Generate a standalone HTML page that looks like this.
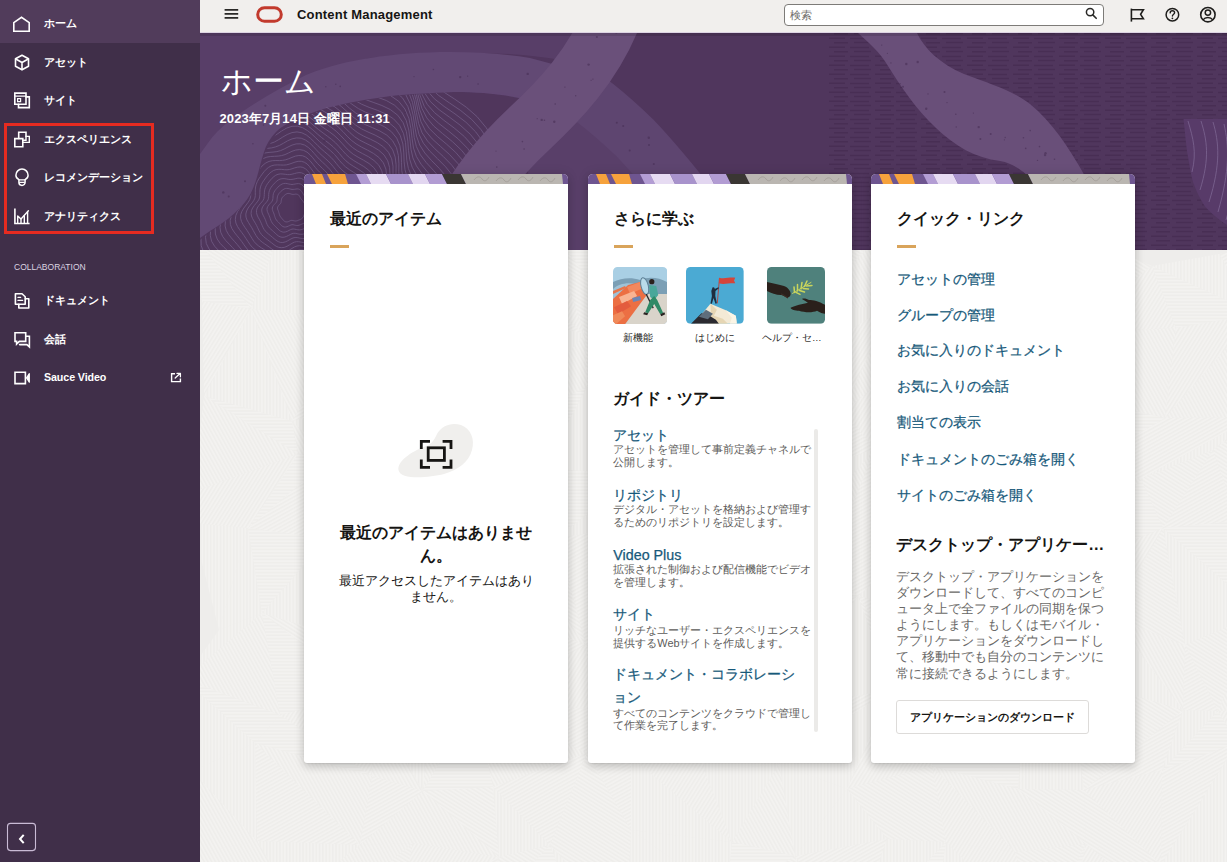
<!DOCTYPE html>
<html lang="ja">
<head>
<meta charset="utf-8">
<title>Content Management</title>
<style>
*{box-sizing:border-box;margin:0;padding:0}
html,body{width:1227px;height:862px;overflow:hidden;background:#efeeec}
body{font-family:"Liberation Sans",sans-serif;color:#161513;position:relative}
.abs{position:absolute}
.t{position:absolute;white-space:nowrap}
/* sidebar */
#side{position:absolute;left:0;top:0;width:200px;height:862px;background:#402f49;overflow:hidden}
#side .sel{position:absolute;left:0;top:0;width:200px;height:43px;background:#513c5b}
.nav{position:absolute;left:44px;color:#fff;font-weight:700;font-size:11px;line-height:14px;white-space:nowrap}
.ico{position:absolute;left:12px;width:20px;height:20px}
.ico svg{display:block}
#redbox{position:absolute;left:4px;top:123px;width:150px;height:111px;border:3px solid #e62b20}
/* topbar */
#top{position:absolute;left:200px;top:0;width:1027px;height:33px;background:#f1efed;overflow:hidden}
/* banner */
#banner{position:absolute;left:200px;top:33px;width:1027px;height:217px;background:#50365d;overflow:hidden}
#bg{position:absolute;left:200px;top:250px;width:1027px;height:612px;background:#f0efed;overflow:hidden}
/* cards */
.card{position:absolute;top:174px;width:264px;height:589px;background:#fff;border-radius:5px 5px 3px 3px;overflow:hidden;box-shadow:0 4px 8px rgba(0,0,0,.15),0 1px 1px rgba(0,0,0,.06),0 0 12px rgba(0,0,0,.10)}
.stripe{position:absolute;left:0;top:0;width:264px;height:10px}
.ctitle{position:absolute;left:26px;font-weight:700;font-size:16px;line-height:20px;white-space:nowrap;color:#161513}
.uline{position:absolute;left:26px;top:71px;width:19px;height:3px;background:#d9a45b}
.lnk{position:absolute;color:#17597a;white-space:nowrap;-webkit-text-stroke:.25px #17597a}
.desc{position:absolute;color:#5c5b59;font-size:10.9px;line-height:12px;white-space:nowrap}
</style>
</head>
<body>

<!-- ============ SIDEBAR ============ -->
<div id="side">
  <div class="sel"></div>
  <div class="nav" style="top:16.25px">ホーム</div>
  <div class="nav" style="top:54.75px">アセット</div>
  <div class="nav" style="top:93.25px">サイト</div>
  <div class="nav" style="top:131.75px">エクスペリエンス</div>
  <div class="nav" style="top:170.25px">レコメンデーション</div>
  <div class="nav" style="top:208.75px">アナリティクス</div>
  <div class="nav" style="top:293.25px">ドキュメント</div>
  <div class="nav" style="top:331.75px">会話</div>
  <div class="nav" style="top:370.25px;font-size:10.7px;letter-spacing:-.1px">Sauce Video</div>
  <div class="t" style="left:14px;top:260.6px;font-size:8.5px;line-height:12px;color:#dcd4e1;letter-spacing:0px">COLLABORATION</div>
  <svg class="abs" style="left:0;top:0" width="200" height="862" viewBox="0 0 200 862" fill="none" stroke="#fff" stroke-width="1.6" stroke-linejoin="round" stroke-linecap="round">
    <!-- home -->
    <path d="M13.8 31.2V22.6L21.5 17.3L29.2 22.6V31.2Z" stroke-linejoin="miter"/>
    <!-- asset cube -->
    <path d="M22 55.2L28.5 58.8V66.2L22 69.8L15.5 66.2V58.8Z"/>
    <path d="M15.8 59L22 62.5L28.2 59M22 62.5V69.5"/>
    <!-- sites -->
    <path d="M14.8 93.1H26V104.2H14.8Z" stroke-linejoin="miter"/>
    <path d="M14.8 96.2H26" stroke-width="1.3"/>
    <path d="M17.6 98.6H20.6V101.6H17.6Z" stroke-width="1.2" stroke-linejoin="miter"/>
    <path d="M26 96.9H29.3V107.6H18.5V104.4" stroke-linejoin="miter"/>
    <!-- experiences -->
    <path d="M14.8 138.6H22.8V146.8H14.8Z" stroke-linejoin="miter"/>
    <path d="M18.7 138.4V132.3H26V136.4" stroke-linejoin="miter"/>
    <path d="M22.8 140.2H26V136.4H29.3V142.4H22.9" stroke-linejoin="miter" stroke-width="1.4"/>
    <!-- bulb -->
    <path d="M18.9 179.7C16.8 178.5 15.9 176.8 15.9 175.2a6.1 6.1 0 1 1 12.2 0c0 1.6-.9 3.3-3 4.5V182.3a3.1 3.1 0 0 1-6.2 0Z" stroke-width="1.5"/>
    <path d="M18.9 179.9H25.1M19.2 182.4H24.8" stroke-width="1.3" stroke-linecap="butt"/>
    <!-- analytics -->
    <path d="M14.9 208.6V223.5H29.6" stroke-linejoin="miter" stroke-linecap="butt"/>
    <path d="M17.7 223V216L21 219L28.4 210.8" stroke-width="1.4"/>
    <path d="M21 223V219.2M24.3 223V215.6M27.6 223V212" stroke-width="1.4"/>
    <!-- documents -->
    <path d="M15.4 293.7H22L25.2 296.8V304.2H15.4Z"/>
    <path d="M18 297.4H20.6M18 300.4H22.6" stroke-width="1.3"/>
    <path d="M25.4 298.8H28.8V308H18.8V304.4" />
    <!-- conversations -->
    <path d="M15 332.7H25.7V341.4H19.3L16.6 344.1V341.4H15Z" stroke-linejoin="miter"/>
    <path d="M25.9 336.2H29.4V346.9L26.9 344.6H19.6" stroke-linejoin="miter"/>
    <!-- video -->
    <path d="M15 372.3H25.4V383.6H15Z" stroke-linejoin="miter"/>
    <path d="M29.3 373.6L26.6 377.9L29.3 382.2Z" fill="#fff" stroke-width="1.2"/>
    <!-- external link -->
    <path d="M175 373.8H171.6V381.6H180.4V378.6" stroke-width="1.4" stroke-linejoin="miter" stroke-linecap="butt"/>
    <path d="M175.2 378L180 373.6M177 373.4H180.4V376.8" stroke-width="1.3"/>
    <!-- collapse button -->
    <rect x="7.5" y="823.4" width="28" height="27.2" rx="3" stroke="#c9bbd5" stroke-width="1.1"/>
    <path d="M23.7 834.8L20 839L23.7 843.2" stroke-width="2" stroke-linejoin="miter" stroke-linecap="butt"/>
  </svg>
  <div id="redbox"></div>
</div>

<!-- ============ TOP BAR ============ -->
<div id="top">
  <div class="abs" style="left:0;top:32px;width:1027px;height:1px;background:#ddd4e3"></div>
  <div class="t" id="cm" style="left:97px;top:7px;font-size:13px;line-height:16px;font-weight:700;color:#161513;letter-spacing:.19px">Content Management</div>
  <div class="abs" style="left:584px;top:3.5px;width:320px;height:22px;background:#fff;border:1px solid #7d7b78;border-radius:4px"></div>
  <div class="t" style="left:590px;top:8px;font-size:11px;line-height:14px;color:#6b6966">検索</div>
  <svg class="abs" style="left:0;top:0" width="1027" height="33" viewBox="200 0 1027 33" fill="none" stroke="#1f1e1c" stroke-width="1.6">
    <!-- hamburger -->
    <path d="M224.6 9.9H238.2M224.6 13.9H238.2M224.6 17.8H238.2" stroke-width="1.7" stroke="#2a2927"/>
    <!-- oracle O -->
    <rect x="257.7" y="7.7" width="23.6" height="13.6" rx="6.8" stroke="#c23a2d" stroke-width="3"/>
    <!-- search -->
    <circle cx="1090.1" cy="12.1" r="3.7" stroke-width="1.5" stroke="#2a2927"/>
    <path d="M1092.8 14.9L1096.2 18.3" stroke-width="1.6" stroke="#2a2927" stroke-linecap="round"/>
    <!-- flag -->
    <path d="M1131.4 8.6V21.6" stroke-width="1.6"/>
    <path d="M1131.4 9.7H1143.4L1140.6 14.3L1143.4 18.8H1131.4" stroke-width="1.6" stroke-linejoin="miter"/>
    <!-- help -->
    <circle cx="1172.4" cy="14.7" r="6.3" stroke-width="1.5"/>
    <path d="M1170.2 12.9C1170.2 11.5 1171.2 10.8 1172.4 10.8C1173.7 10.8 1174.6 11.6 1174.6 12.7C1174.6 14.2 1172.4 14.3 1172.4 16.1" stroke-width="1.4" stroke-linecap="round"/>
    <circle cx="1172.4" cy="18.3" r="0.9" fill="#1f1e1c" stroke="none"/>
    <!-- user -->
    <circle cx="1207.9" cy="14.7" r="7.2" stroke-width="1.6"/>
    <circle cx="1207.9" cy="12.6" r="2.7" stroke-width="1.5"/>
    <path d="M1203 19.9C1204.2 18.3 1205.8 17.6 1207.9 17.6C1210 17.6 1211.6 18.3 1212.8 19.9" stroke-width="1.5"/>
  </svg>
</div>

<!-- ============ BANNER ============ -->
<div id="banner">
  <svg class="abs" style="left:0;top:0" width="1027" height="217" viewBox="200 33 1027 217">
    <defs>
      <pattern id="dash" x="0" y="0" width="46" height="9" patternUnits="userSpaceOnUse">
        <path d="M1 2.2h16M22 2.6h19M6 6.8h14M26 6.5h17" stroke="#442b50" stroke-width="1.5" fill="none" opacity=".7"/>
      </pattern>
      <filter id="grain" x="0" y="0" width="100%" height="100%">
        <feTurbulence type="fractalNoise" baseFrequency="0.9" numOctaves="2" seed="3" result="n"/>
        <feColorMatrix type="matrix" values="0 0 0 0 0.1  0 0 0 0 0.05  0 0 0 0 0.15  0 0 0 0.55 -0.22"/>
      </filter>
    </defs>
    <rect x="200" y="33" width="1027" height="217" fill="#50365d"/>
    <clipPath id="cl1"><path d="M200 240L210 232L234 215L251 195L258 177L265 152L277 133L300 119L327 107L391 96L454 92L500 92L540 100L560 112L640 140V250H200Z"/></clipPath>
    <!-- upper-left zone (above arch) -->
    <path d="M200 33H600L560 60C520 52 454 50 370 58C306 72 242 110 200 156Z" fill="#583e68"/>
    <!-- lighter patch between ribbons (behind gap card1/card2) -->
    <path d="M520 120L600 120L640 170L630 250H540Z" fill="#593f69"/>
    <!-- ribbon B: arch (left leg) -->
    <path d="M200 154C206 146 211 138 217 132C225 124 233 118 242 112C262 98 284 86 306 75C328 66 350 61 370 58C420 50 480 50 530 58L575 70L560 112C540 100 500 92 454 92C430 93 410 94 391 96C368 99 346 103 327 108C316 111 308 114 300 118C290 122 282 126 276 132C270 138 266 145 264 152C261 161 259 170 257 177C255 184 253 189 250.5 194C246 202 240 208 233.7 214C226 221 218 226 210 231L200 238Z" fill="#624974"/>
    <!-- contour lines -->
    <g clip-path="url(#cl1)" fill="none" stroke="#8b79a3" stroke-width=".9" opacity=".5" stroke-linejoin="round">
      <path d="M307.4 208.0L307.5 209.0L307.3 210.0L306.8 210.9L306.1 211.8L305.5 212.6L304.9 213.3L304.4 214.1L304.1 215.0L303.7 215.8L303.4 216.7L302.9 217.5L302.2 218.2L301.5 218.8L300.6 219.3L299.8 219.7L298.9 220.0L298.1 220.4L297.3 220.7L296.4 220.9L295.5 221.0L294.6 220.9L293.7 220.7L292.8 220.5L292.0 220.4L291.2 220.4L290.3 220.7L289.4 221.1L288.4 221.6L287.3 221.9L286.2 221.9L285.2 221.7L284.4 221.2L283.6 220.5L283.0 219.8L282.4 219.0L281.7 218.3L281.1 217.5L280.5 216.8L280.0 216.0L279.6 215.2L279.3 214.3L279.1 213.4L278.8 212.5L278.6 211.6L278.3 210.7L277.9 209.9L277.6 208.9L277.5 208.0L277.7 207.1L278.1 206.2L278.7 205.4L279.5 204.6L280.1 204.0L280.7 203.3L281.0 202.6L281.1 201.7L281.2 200.8L281.4 199.8L281.6 198.9L282.0 198.0L282.5 197.2L283.2 196.5L283.8 195.8L284.6 195.2L285.4 194.5L286.2 194.0L287.1 193.6L288.1 193.4L289.1 193.5L290.1 193.7L291.1 194.0L292.0 194.3L292.9 194.4L293.8 194.4L294.7 194.3L295.7 194.1L296.7 194.2L297.6 194.4L298.5 194.9L299.1 195.6L299.7 196.5L300.2 197.4L300.6 198.2L301.1 198.9L301.6 199.6L302.2 200.2L302.7 200.8L303.2 201.5L303.7 202.3L304.1 203.0L304.6 203.7L305.1 204.5L305.8 205.3L306.4 206.1L307.0 207.0L307.4 208.0"/>
      <path d="M313.0 208.0L313.0 209.4L312.5 210.7L311.8 211.9L310.9 213.1L310.1 214.1L309.4 215.2L308.9 216.3L308.5 217.5L308.1 218.8L307.6 220.0L306.8 221.0L305.9 221.9L304.8 222.6L303.7 223.3L302.6 223.8L301.4 224.3L300.3 224.8L299.1 225.2L297.9 225.5L296.7 225.5L295.4 225.3L294.2 225.0L293.1 224.7L292.0 224.7L290.9 225.0L289.7 225.5L288.4 226.1L287.0 226.7L285.5 227.0L284.1 227.0L282.9 226.5L281.7 225.8L280.8 224.8L279.9 223.8L279.0 222.8L278.1 221.9L277.2 221.0L276.4 220.0L275.7 218.9L275.2 217.7L274.8 216.5L274.4 215.3L274.1 214.1L273.6 212.9L273.1 211.8L272.6 210.5L272.3 209.3L272.3 208.0L272.7 206.7L273.4 205.5L274.3 204.5L275.3 203.5L276.1 202.6L276.7 201.6L277.0 200.6L277.1 199.4L277.2 198.1L277.4 196.8L277.8 195.5L278.4 194.4L279.1 193.3L280.0 192.4L280.9 191.4L281.9 190.5L283.0 189.7L284.1 189.0L285.4 188.5L286.7 188.4L288.1 188.5L289.5 188.8L290.8 189.2L292.0 189.4L293.2 189.4L294.5 189.3L295.8 189.1L297.1 188.9L298.4 189.0L299.7 189.5L300.7 190.3L301.6 191.4L302.3 192.5L303.0 193.7L303.6 194.8L304.3 195.7L305.1 196.6L305.8 197.4L306.5 198.3L307.2 199.2L307.8 200.2L308.4 201.2L309.1 202.2L310.0 203.2L310.9 204.2L311.8 205.4L312.6 206.7L313.0 208.0"/>
      <path d="M318.5 208.0L318.3 209.7L317.6 211.4L316.6 212.9L315.6 214.3L314.7 215.7L314.0 217.1L313.5 218.6L313.1 220.2L312.6 221.7L311.8 223.2L310.8 224.5L309.6 225.6L308.2 226.5L306.8 227.3L305.4 228.0L303.9 228.7L302.5 229.3L301.0 229.7L299.4 229.9L297.8 229.8L296.3 229.5L294.8 229.2L293.4 229.0L292.0 229.1L290.6 229.6L289.0 230.4L287.4 231.3L285.6 231.9L283.8 232.2L282.1 231.9L280.5 231.2L279.2 230.2L277.9 229.0L276.8 227.8L275.6 226.7L274.5 225.5L273.3 224.4L272.3 223.1L271.5 221.7L270.8 220.2L270.3 218.7L269.8 217.2L269.2 215.7L268.6 214.3L267.9 212.8L267.3 211.3L267.0 209.6L267.1 208.0L267.8 206.4L268.8 204.9L270.0 203.6L271.2 202.4L272.1 201.2L272.6 200.0L272.9 198.6L273.0 197.0L273.1 195.4L273.4 193.7L274.0 192.2L274.8 190.8L275.8 189.5L276.9 188.3L278.0 187.1L279.2 185.9L280.6 184.9L282.1 184.0L283.7 183.5L285.4 183.4L287.2 183.6L288.8 184.0L290.4 184.3L292.0 184.5L293.6 184.3L295.2 184.0L296.8 183.7L298.5 183.6L300.2 183.9L301.7 184.6L303.0 185.8L304.0 187.2L304.9 188.7L305.7 190.1L306.6 191.3L307.5 192.5L308.5 193.5L309.5 194.6L310.3 195.7L311.1 196.9L311.9 198.2L312.8 199.4L313.8 200.6L314.9 201.9L316.2 203.2L317.3 204.7L318.1 206.3L318.5 208.0"/>
      <path d="M323.9 208.0L323.4 210.1L322.5 212.0L321.3 213.8L320.2 215.5L319.3 217.3L318.7 219.0L318.2 220.9L317.8 222.9L317.1 224.8L316.1 226.5L314.8 228.0L313.3 229.3L311.6 230.3L309.9 231.3L308.2 232.2L306.5 233.1L304.7 233.7L302.8 234.2L300.9 234.3L299.0 234.1L297.1 233.7L295.3 233.3L293.7 233.3L292.0 233.7L290.3 234.5L288.4 235.5L286.3 236.5L284.2 237.2L282.0 237.3L280.1 236.8L278.3 235.9L276.7 234.6L275.2 233.2L273.7 231.8L272.3 230.5L270.8 229.2L269.4 227.8L268.2 226.3L267.2 224.6L266.4 222.8L265.8 220.9L265.1 219.2L264.3 217.4L263.4 215.7L262.5 213.9L261.9 212.0L261.7 210.0L262.1 208.0L263.1 206.1L264.4 204.4L265.9 202.8L267.1 201.3L268.0 199.9L268.5 198.3L268.7 196.5L268.7 194.6L268.9 192.6L269.4 190.6L270.2 188.8L271.2 187.2L272.4 185.6L273.7 184.1L275.1 182.7L276.6 181.2L278.2 180.0L280.0 179.1L282.0 178.7L284.1 178.6L286.2 178.9L288.2 179.3L290.1 179.5L292.0 179.4L293.9 179.1L295.9 178.6L297.9 178.2L300.0 178.2L301.9 178.7L303.7 179.8L305.1 181.4L306.4 183.1L307.4 184.9L308.5 186.5L309.6 187.9L310.8 189.2L312.0 190.5L313.1 191.8L314.1 193.2L315.1 194.7L316.1 196.1L317.2 197.6L318.5 199.0L320.0 200.5L321.5 202.1L322.8 203.9L323.7 205.9L323.9 208.0"/>
      <path d="M329.1 208.0L328.3 210.4L327.2 212.6L325.9 214.7L324.8 216.8L324.0 218.8L323.4 221.0L323.0 223.3L322.5 225.6L321.7 227.8L320.4 229.8L318.8 231.5L316.9 232.9L314.9 234.2L313.0 235.3L311.0 236.4L309.0 237.4L306.9 238.2L304.6 238.5L302.4 238.5L300.1 238.2L297.9 237.7L295.9 237.5L293.9 237.7L292.0 238.4L289.9 239.5L287.7 240.8L285.3 241.9L282.8 242.5L280.3 242.4L278.1 241.6L276.0 240.3L274.2 238.8L272.4 237.3L270.7 235.8L268.9 234.3L267.1 232.9L265.5 231.2L264.1 229.4L263.0 227.4L262.1 225.3L261.2 223.2L260.3 221.2L259.2 219.1L258.0 217.1L257.1 215.0L256.5 212.7L256.5 210.3L257.2 208.0L258.6 205.8L260.2 203.8L261.8 202.0L263.1 200.3L263.9 198.5L264.2 196.5L264.3 194.4L264.4 192.1L264.7 189.8L265.4 187.6L266.4 185.5L267.6 183.6L269.0 181.8L270.5 180.0L272.1 178.2L273.9 176.6L275.8 175.2L278.0 174.3L280.4 173.9L282.9 174.0L285.3 174.3L287.6 174.6L289.8 174.6L292.0 174.2L294.3 173.6L296.6 173.0L299.0 172.6L301.4 172.8L303.7 173.7L305.6 175.2L307.2 177.1L308.6 179.2L309.9 181.2L311.2 182.9L312.6 184.5L314.0 186.0L315.4 187.5L316.7 189.0L317.9 190.7L319.0 192.4L320.2 194.1L321.7 195.7L323.4 197.3L325.2 199.1L327.0 201.0L328.4 203.2L329.1 205.6L329.1 208.0"/>
      <path d="M334.1 208.0L333.1 210.7L331.7 213.2L330.4 215.6L329.4 218.0L328.8 220.5L328.4 223.1L328.0 225.7L327.3 228.4L326.2 230.9L324.7 233.1L322.7 234.9L320.6 236.6L318.3 238.0L316.1 239.4L313.8 240.7L311.5 241.8L309.0 242.5L306.4 242.7L303.7 242.6L301.1 242.1L298.7 241.7L296.4 241.7L294.2 242.2L292.0 243.3L289.6 244.8L287.0 246.3L284.2 247.4L281.3 247.7L278.6 247.3L276.2 246.3L273.9 244.7L271.8 243.0L269.7 241.4L267.6 239.8L265.5 238.2L263.5 236.5L261.6 234.6L260.1 232.5L258.8 230.2L257.7 227.8L256.6 225.5L255.3 223.2L253.9 220.9L252.6 218.6L251.5 216.0L251.1 213.4L251.4 210.7L252.6 208.0L254.3 205.5L256.1 203.3L257.8 201.2L259.0 199.2L259.7 197.0L259.9 194.7L259.9 192.2L260.0 189.5L260.5 186.9L261.4 184.5L262.6 182.2L264.1 180.1L265.6 177.9L267.3 175.8L269.1 173.8L271.2 172.0L273.5 170.5L276.1 169.6L278.9 169.3L281.7 169.4L284.4 169.7L287.0 169.8L289.5 169.5L292.0 168.8L294.6 167.9L297.4 167.2L300.2 166.9L302.9 167.4L305.3 168.7L307.5 170.6L309.3 172.9L310.9 175.3L312.4 177.4L314.0 179.3L315.6 181.1L317.3 182.7L318.8 184.5L320.3 186.3L321.6 188.2L323.0 190.1L324.5 192.0L326.3 193.8L328.4 195.6L330.6 197.7L332.5 199.9L333.9 202.5L334.4 205.2L334.1 208.0"/>
      <path d="M338.9 208.0L337.6 211.0L336.2 213.8L335.0 216.5L334.1 219.3L333.7 222.2L333.4 225.2L333.0 228.2L332.2 231.2L330.8 233.9L328.9 236.3L326.6 238.4L324.2 240.2L321.7 241.9L319.2 243.5L316.7 244.9L314.0 246.1L311.1 246.7L308.1 246.8L305.1 246.5L302.2 246.0L299.5 245.7L297.0 246.0L294.6 246.9L292.0 248.4L289.2 250.2L286.2 251.8L283.1 252.8L280.0 252.9L277.0 252.2L274.3 250.8L271.8 249.0L269.4 247.2L267.0 245.5L264.5 243.8L262.1 242.1L259.8 240.2L257.8 238.0L256.1 235.6L254.6 233.0L253.2 230.4L251.8 227.8L250.2 225.3L248.6 222.7L247.0 220.0L246.0 217.1L245.8 214.1L246.6 211.0L248.1 208.0L250.1 205.3L252.2 202.8L253.8 200.4L254.9 198.1L255.3 195.5L255.3 192.8L255.3 189.9L255.6 187.0L256.3 184.1L257.4 181.4L258.8 178.9L260.5 176.5L262.2 174.1L264.1 171.6L266.2 169.3L268.5 167.4L271.2 165.9L274.2 165.1L277.4 164.9L280.5 165.0L283.5 165.1L286.3 164.9L289.1 164.2L292.0 163.2L295.0 162.1L298.1 161.3L301.3 161.3L304.3 162.2L307.0 163.9L309.3 166.3L311.3 168.9L313.1 171.4L314.9 173.7L316.8 175.7L318.7 177.6L320.5 179.5L322.3 181.5L323.8 183.6L325.4 185.7L327.0 187.8L328.9 189.8L331.1 191.8L333.6 193.9L336.0 196.2L338.0 198.8L339.2 201.8L339.5 204.9L338.9 208.0"/>
      <path d="M343.5 208.0L342.1 211.3L340.6 214.4L339.6 217.5L339.0 220.6L338.8 223.9L338.6 227.3L338.1 230.8L337.1 234.0L335.4 237.0L333.1 239.6L330.6 241.8L327.9 243.9L325.2 245.8L322.4 247.6L319.5 249.2L316.4 250.3L313.1 250.8L309.7 250.7L306.4 250.3L303.2 249.9L300.3 249.8L297.6 250.5L294.9 251.9L292.0 253.8L288.9 255.8M272.5 255.1L269.7 253.2L267.0 251.3L264.2 249.6L261.4 247.9L258.7 246.0L256.1 243.9L253.9 241.4L252.1 238.6L250.4 235.8L248.7 233.0L246.9 230.2L245.0 227.5L243.1 224.6L241.5 221.5L240.6 218.2L240.7 214.7L241.9 211.3L243.9 208.0L246.1 205.0L248.2 202.2L249.8 199.6L250.6 196.9L250.8 194.0L250.7 190.9L250.7 187.6L251.1 184.4L252.1 181.3L253.4 178.4L255.1 175.6L256.9 172.9L258.8 170.1L260.9 167.4L263.2 164.9L265.9 162.9L269.0 161.4L272.4 160.7L275.9 160.5L279.3 160.6L282.5 160.4L285.7 159.8L288.8 158.7L292.0 157.4L295.4 156.1L298.9 155.5L302.4 155.7L305.7 157.1L308.5 159.3L311.1 162.0L313.3 164.9L315.4 167.5L317.4 169.9L319.6 172.1L321.7 174.1L323.8 176.2L325.6 178.5L327.4 180.9L329.1 183.2L331.1 185.4L333.4 187.6L336.0 189.8L338.9 192.1L341.5 194.7L343.5 197.8L344.5 201.1L344.4 204.6L343.5 208.0"/>
      <path d="M347.8 208.0L346.4 211.6L345.1 215.0L344.4 218.4L344.1 222.0L344.1 225.7L343.9 229.5L343.3 233.3L341.9 236.8L339.9 240.0L337.3 242.8L334.5 245.3L331.6 247.6L328.6 249.7L325.6 251.7L322.3 253.3L318.8 254.4M307.6 254.0L304.3 253.7L301.2 254.0M264.6 255.5L261.4 253.7L258.3 251.9L255.3 249.9L252.5 247.5L250.1 244.7L248.1 241.7L246.1 238.7L244.1 235.7L241.9 232.7L239.6 229.7L237.5 226.5L235.9 223.0L235.3 219.3L235.9 215.4L237.5 211.6L239.8 208.0L242.2 204.7L244.3 201.7L245.5 198.8L246.1 195.7L246.1 192.4L245.9 188.9L246.1 185.4L246.7 181.9L247.9 178.5L249.5 175.4L251.3 172.3L253.3 169.3L255.3 166.2L257.6 163.2L260.3 160.5L263.4 158.5L266.9 157.1L270.7 156.5L274.4 156.3L278.1 156.1L281.6 155.6L285.0 154.6L288.4 153.0L292.0 151.3L295.8 150.0L299.7 149.6L303.5 150.3L307.0 152.1L310.1 154.8L312.8 157.8L315.2 160.9L317.6 163.6L320.0 166.1L322.4 168.4L324.8 170.6L327.0 173.0L329.0 175.6L330.9 178.1L332.9 180.7L335.3 183.0L338.0 185.3L341.1 187.6L344.3 190.3L346.9 193.3L348.8 196.7L349.4 200.4L349.0 204.3L347.8 208.0"/>
      <path d="M352.1 208.0L350.7 211.8L349.7 215.6L349.3 219.4L349.3 223.4L349.5 227.5L349.3 231.7L348.4 235.8L346.7 239.6L344.3 243.0L341.5 246.0L338.4 248.7L335.3 251.3L332.1 253.7L328.7 255.8M255.1 256.0L251.9 253.8L248.9 251.1L246.4 248.0L244.0 244.8L241.8 241.6L239.3 238.4L236.7 235.3L234.1 232.0L231.8 228.4L230.4 224.5L230.2 220.3L231.3 216.0L233.4 211.8L235.9 208.0L238.4 204.5L240.2 201.2L241.2 197.9L241.4 194.4L241.2 190.8L241.1 186.9L241.4 183.1L242.3 179.3L243.8 175.8L245.6 172.4L247.6 169.0L249.6 165.6L251.9 162.2L254.4 159.0L257.4 156.3L261.0 154.2L264.9 153.0L269.0 152.4L273.0 152.1L276.9 151.6L280.6 150.6L284.2 149.0L288.0 147.0L292.0 145.1L296.2 143.9L300.4 143.8L304.5 145.0L308.2 147.4L311.5 150.4L314.5 153.8L317.2 156.9L319.9 159.7L322.6 162.3L325.2 164.7L327.8 167.2L330.2 169.8L332.3 172.6L334.5 175.4L336.8 178.0L339.6 180.5L342.9 182.9L346.4 185.5L349.7 188.4L352.3 191.8L353.9 195.7L354.2 199.8L353.4 204.0L352.1 208.0"/>
      <path d="M356.2 208.0L355.0 212.1L354.4 216.2L354.4 220.4L354.8 224.8L355.0 229.4L354.7 234.0L353.5 238.3L351.5 242.3L348.7 245.9L345.6 249.2L342.4 252.2L339.1 255.1M245.4 254.6L242.6 251.3L240.0 247.9L237.3 244.6L234.4 241.3L231.3 237.9L228.4 234.3L226.2 230.3L225.1 225.9L225.4 221.3L226.9 216.6L229.4 212.1L232.1 208.0L234.5 204.2L236.0 200.6L236.6 197.0L236.5 193.1L236.3 189.1L236.3 184.9L236.8 180.8L238.0 176.8L239.7 173.1L241.7 169.4L243.8 165.7L245.9 161.9L248.4 158.3L251.2 154.9L254.6 152.1L258.6 150.1L262.9 149.0L267.3 148.4L271.6 147.9L275.6 146.9L279.5 145.4L283.5 143.2L287.6 140.8L292.0 138.9L296.6 137.9L301.2 138.2L305.5 140.0L309.5 142.8L313.0 146.2L316.2 149.7L319.2 152.9L322.2 155.7L325.2 158.4L328.1 161.0L330.8 163.8L333.3 166.7L335.6 169.7L338.1 172.7L340.8 175.4L344.1 177.9L347.9 180.5L351.7 183.3L355.1 186.6L357.5 190.4L358.7 194.7L358.6 199.2L357.6 203.7L356.2 208.0"/>
      <path d="M360.3 208.0L359.5 212.4L359.3 216.9L359.8 221.5L360.4 226.3L360.6 231.3L360.1 236.2L358.5 240.8L356.1 245.0L353.1 248.9L349.8 252.4L346.4 255.7M238.8 254.7L235.8 251.1L232.6 247.7L229.3 244.2L225.8 240.6L222.8 236.7L220.7 232.2L220.0 227.3L220.8 222.2L222.9 217.1L225.6 212.4L228.4 208.0L230.4 204.0L231.6 200.0L231.8 196.0L231.5 191.8L231.2 187.4L231.4 182.9L232.3 178.5L233.8 174.4L235.7 170.4L237.8 166.4L239.9 162.3L242.2 158.2L244.9 154.3L248.1 150.8L252.0 148.1L256.4 146.3L261.0 145.2L265.7 144.4L270.1 143.5L274.3 142.1L278.4 139.8L282.7 137.1L287.2 134.5L292.0 132.6L297.0 131.9L301.9 132.8L306.5 135.1L310.6 138.4L314.4 142.1L317.8 145.6L321.2 148.8L324.5 151.7L327.8 154.5L330.9 157.3L333.8 160.4L336.4 163.6L339.0 166.8L341.8 169.8L345.0 172.6L348.8 175.2L353.0 177.9L357.0 181.1L360.4 184.8L362.5 189.1L363.3 193.8L362.8 198.7L361.6 203.4L360.3 208.0"/>
      <path d="M364.5 208.0L364.1 212.7L364.5 217.5L365.3 222.6L366.1 227.9L366.2 233.2L365.4 238.4L363.5 243.3L360.8 247.7L357.6 251.8L354.1 255.6M231.5 254.4L227.8 250.9L224.0 247.3L220.2 243.4L217.2 239.0L215.4 234.0L215.2 228.6L216.5 223.0L219.0 217.6L221.9 212.6L224.5 208.0L226.2 203.7L226.9 199.4L226.8 195.0L226.3 190.4L226.2 185.7L226.6 180.9L227.8 176.3L229.6 171.9L231.6 167.6L233.8 163.3L236.0 158.9L238.5 154.5L241.5 150.4L245.1 146.9L249.4 144.3L254.2 142.5L259.2 141.4L264.0 140.4L268.6 139.0L272.9 136.9L277.3 134.0L281.8 130.8L286.8 128.0L292.0 126.3L297.4 126.2L302.6 127.7L307.4 130.5L311.8 134.1L315.8 137.9L319.5 141.5L323.2 144.7L326.9 147.6L330.4 150.6L333.7 153.7L336.7 157.0L339.5 160.5L342.4 163.8L345.6 166.9L349.4 169.7L353.7 172.4L358.2 175.3L362.4 178.9L365.5 183.0L367.3 187.8L367.6 193.0L366.8 198.2L365.5 203.2L364.5 208.0"/>
      <path d="M368.8 208.0L369.0 213.0L369.9 218.3L371.1 223.7L371.9 229.4L371.8 235.1L370.7 240.6L368.4 245.7L365.4 250.4L362.0 254.8M222.8 254.2L218.5 250.4L214.6 246.2L211.6 241.3L210.3 235.7L210.6 229.8L212.5 223.8L215.4 218.1L218.3 212.8L220.5 208.0L221.8 203.4L222.0 198.8L221.6 194.0L221.1 189.0L221.1 183.9L221.9 179.0L223.4 174.2L225.4 169.5L227.5 164.9L229.8 160.2L232.1 155.5L234.8 150.8L238.2 146.6L242.2 143.1L247.0 140.6L252.1 139.0L257.3 137.7L262.3 136.3L267.0 134.3L271.5 131.4L276.1 127.9L281.0 124.4L286.3 121.6L292.0 120.2L297.7 120.6L303.2 122.7L308.3 126.1L312.9 129.9L317.2 133.8L321.3 137.3L325.3 140.5L329.2 143.5L333.0 146.7L336.4 150.1L339.6 153.7L342.6 157.4L345.9 160.8L349.6 163.8L353.9 166.6L358.7 169.5L363.5 172.7L367.6 176.7L370.4 181.4L371.7 186.6L371.6 192.2L370.6 197.7L369.4 202.9L368.8 208.0"/>
      <path d="M373.3 208.0L374.1 213.4L375.5 219.0L376.9 224.9L377.7 231.0L377.4 237.0L375.8 242.7L373.3 248.1L370.0 253.1L366.5 257.8M217.6 257.7L212.9 253.6L209.0 248.9L206.3 243.5L205.5 237.4L206.4 230.9L208.8 224.5L211.8 218.6L214.5 213.1L216.4 208.0L217.1 203.1L216.8 198.1L216.2 192.9L215.9 187.6L216.2 182.3L217.3 177.0L219.0 172.0L221.2 167.1L223.4 162.2L225.7 157.1L228.2 152.0L231.2 147.2L234.9 142.9L239.5 139.6L244.7 137.2L250.1 135.5L255.5 134.0L260.5 132.0L265.3 129.2L269.9 125.6L274.8 121.5L280.1 117.8L285.9 115.2L292.0 114.3L298.1 115.4L303.8 118.1L309.2 121.7L314.0 125.8L318.6 129.6L323.1 133.0L327.4 136.2L331.6 139.4L335.5 142.8L339.1 146.6L342.5 150.5L345.8 154.2L349.5 157.6L353.8 160.6L358.7 163.5L363.8 166.5L368.7 170.2L372.6 174.6L375.0 179.8L375.8 185.6L375.3 191.4L374.3 197.2L373.4 202.7L373.3 208.0"/>
      <path d="M378.1 208.0L379.5 213.7L381.4 219.8L382.9 226.1L383.5 232.5L382.8 238.8L380.9 244.8L378.1 250.5L374.7 255.7M207.4 256.9L203.5 251.7L201.2 245.6L201.0 238.9L202.5 232.0L205.3 225.3L208.2 219.0L210.6 213.3L211.9 208.0L212.1 202.8L211.5 197.4L210.8 191.9L210.6 186.2L211.3 180.6L212.7 175.2L214.7 169.9L216.9 164.7L219.2 159.4L221.6 153.9L224.3 148.6L227.6 143.6L231.9 139.4L236.9 136.2L242.5 133.9L248.2 132.1L253.6 130.1L258.6 127.5L263.4 123.9L268.3 119.5L273.5 115.0L279.3 111.2L285.5 108.9L292.0 108.7L298.4 110.4L304.4 113.6L310.0 117.5L315.2 121.6L320.1 125.3L324.9 128.7L329.5 131.9L334.0 135.3L338.1 139.1L341.8 143.1L345.4 147.1L349.1 150.9L353.3 154.3L358.1 157.2L363.6 160.2L369.0 163.5L373.8 167.6L377.4 172.6L379.2 178.4L379.6 184.5L378.9 190.7L377.9 196.7L377.6 202.4L378.1 208.0"/>
      <path d="M383.2 208.0L385.2 214.1L387.4 220.6L388.9 227.3L389.2 234.1L388.2 240.7L386.0 246.9L382.9 252.8L379.4 258.5M198.2 254.3L196.5 247.6L196.9 240.3L198.9 232.9L201.8 225.9L204.6 219.5L206.5 213.6L207.2 208.0L206.8 202.4L206.0 196.7L205.4 190.8L205.5 184.8L206.5 179.0L208.2 173.3L210.4 167.8L212.7 162.2L215.0 156.5L217.4 150.8L220.4 145.2L224.2 140.2L229.0 136.1L234.5 133.0L240.4 130.7L246.2 128.6L251.6 126.1L256.6 122.6L261.5 118.2L266.6 113.1L272.2 108.3L278.4 104.7L285.1 102.9L292.0 103.4L298.7 105.7L305.0 109.2L310.8 113.3L316.3 117.3L321.6 120.9L326.7 124.2L331.6 127.6L336.3 131.3L340.5 135.4L344.5 139.6L348.3 143.8L352.5 147.5L357.3 150.8L362.7 153.7L368.6 156.8L374.1 160.6L378.8 165.2L381.8 170.8L383.1 177.1L383.1 183.6L382.3 190.0L381.7 196.2L381.9 202.1L383.2 208.0"/>
      <path d="M388.6 208.0L391.1 214.5L393.5 221.4L394.9 228.5L394.9 235.6L393.5 242.4L390.9 249.0L387.7 255.2M195.5 233.9L198.4 226.6L200.8 220.0L202.1 213.9L202.1 208.0L201.3 202.1L200.4 195.9L200.0 189.7L200.4 183.5L201.8 177.4L203.8 171.5L206.1 165.6L208.3 159.7L210.6 153.6L213.3 147.6L216.6 141.9L221.0 137.0L226.2 133.0L232.2 130.0L238.3 127.6L244.1 125.0L249.5 121.7L254.5 117.4L259.4 112.1L264.8 106.5L270.8 101.6L277.6 98.3L284.7 97.2L292.0 98.3L299.0 101.2L305.6 105.0L311.7 109.1L317.5 112.9L323.1 116.4L328.5 119.8L333.7 123.3L338.6 127.3L343.0 131.7L347.1 136.2L351.4 140.3L356.1 143.9L361.5 147.1L367.5 150.1L373.6 153.5L379.2 157.7L383.4 162.9L385.9 169.1L386.7 175.8L386.4 182.7L385.7 189.4L385.6 195.7L386.6 201.8L388.6 208.0"/>
      <path d="M394.3 208.0L397.2 214.9L399.6 222.2L400.7 229.6L400.4 237.0L398.6 244.2L395.9 251.0L392.6 257.6M194.9 227.3L196.8 220.5L197.3 214.2L196.8 208.0L195.7 201.7M195.5 182.1L197.2 175.8L199.4 169.6L201.7 163.5L203.9 157.1L206.3 150.7L209.2 144.5L213.0 138.7L217.9 133.9L223.7 130.1L229.9 127.1L236.1 124.4L241.9 121.2L247.2 117.1L252.2 111.8L257.3 105.8L263.0 99.8L269.5 95.0L276.8 92.2L284.4 91.8L292.0 93.6L299.3 96.9L306.1 100.8L312.5 104.8L318.7 108.4L324.6 111.8L330.4 115.3L335.8 119.1L340.8 123.5L345.4 128.1L349.9 132.6L354.5 136.7L359.8 140.2L365.8 143.2L372.3 146.4L378.6 150.1L384.0 154.9L387.7 160.8L389.6 167.6L390.0 174.7L389.5 181.9L389.2 188.7L389.8 195.1L391.5 201.5L394.3 208.0"/>
      <path d="M400.2 208.0L403.4 215.3L405.7 223.0L406.5 230.8L405.8 238.5L403.7 245.9L400.9 253.1L397.6 260.1M194.9 167.8L197.2 161.2L199.4 154.6L202.0 147.9L205.3 141.5L209.6 135.8L215.1 131.1L221.3 127.4L227.8 124.3L233.9 121.1L239.6 117.2L244.7 112.1L249.7 105.8L255.1 99.2L261.2 93.1L268.3 88.6L276.0 86.5L284.1 86.8L292.0 89.1L299.6 92.6L306.7 96.6L313.4 100.4L319.9 103.8L326.2 107.2L332.3 110.8L337.9 115.0L343.0 119.6L347.8 124.4L352.7 128.9L357.9 132.9L363.8 136.2L370.4 139.2L377.2 142.6L383.5 146.9L388.5 152.3L391.7 158.8L393.0 166.2L393.0 173.7L392.7 181.0L392.9 187.9L394.3 194.5L396.9 201.1L400.2 208.0"/>
      <path d="M406.3 208.0L409.6 215.7L411.7 223.8L412.1 231.9L411.0 239.9L408.8 247.7L406.0 255.2M194.9 152.0L197.7 145.0L201.5 138.6L206.4 133.0L212.4 128.4L219.0 124.8L225.6 121.4L231.6 117.6L237.0 112.8L242.0 106.6L247.1 99.6L252.8 92.5L259.4 86.4L267.0 82.5M292.0 84.8L299.8 88.5L307.2 92.3L314.3 95.8L321.2 99.1L327.8 102.5L334.1 106.4L339.9 110.9L345.2 115.8L350.3 120.7L355.6 125.1L361.4 128.8L368.0 132.0L375.1 135.1L382.1 138.9L388.2 143.7L392.7 149.9L395.2 157.1L396.1 164.9L396.0 172.7L395.9 180.1L396.9 187.1L399.1 193.9L402.5 200.8L406.3 208.0"/>
      <path d="M412.6 208.0L415.8 216.1L417.6 224.5L417.6 233.0L416.3 241.3L414.0 249.4L411.1 257.3M193.6 142.3L197.9 135.8L203.5 130.4L210.0 126.0L216.8 122.2L223.3 118.4L229.1 113.9L234.3 108.0L239.2 100.8L244.4 93.1L250.5 85.7M300.1 84.3L307.8 87.8L315.3 91.1L322.5 94.3L329.4 97.9L335.9 102.1L341.8 106.9L347.4 112.0L352.9 116.9L358.7 121.1L365.2 124.6L372.4 127.6L379.8 131.0L386.9 135.2L392.6 140.8L396.5 147.7L398.4 155.5L398.9 163.7L398.8 171.7L399.4 179.2L401.1 186.3L404.3 193.2L408.4 200.4L412.6 208.0"/>
      <path d="M418.8 208.0L421.9 216.5L423.3 225.3L423.0 234.1L421.5 242.7L419.2 251.2L416.3 259.5M194.6 133.3L200.8 128.0L207.6 123.6L214.5 119.6L220.8 115.2L226.3 109.7L231.2 102.8L236.1 94.7L241.6 86.4L248.2 79.1M308.4 83.2L316.2 86.3L323.7 89.5L330.9 93.4L337.6 97.9L343.8 103.0L349.6 108.2L355.6 112.9L362.0 116.8L369.1 120.0L376.9 123.1L384.6 126.8L391.4 131.7L396.7 138.1L399.9 145.7L401.2 154.1L401.5 162.6L401.8 170.7L403.1 178.2L405.8 185.4L409.8 192.5L414.5 200.0L418.8 208.0"/>
      <path d="M425.1 208.0L427.9 216.9L428.9 226.0L428.3 235.1L426.7 244.1L424.4 253.0L421.7 261.7M191.6 130.9L198.3 125.8L205.4 121.4L212.2 117.0L218.2 111.8L223.3 105.2L228.0 97.2L233.0 88.3L238.9 79.7M325.0 84.8L332.4 88.9L339.3 93.8L345.7 99.1L351.9 104.2L358.4 108.6L365.5 112.2L373.3 115.3L381.4 118.6L389.2 122.8L395.7 128.4L400.3 135.6L402.9 144.0L403.8 152.9L404.1 161.6L405.0 169.7L407.1 177.2L410.8 184.4L415.7 191.7L420.8 199.6L425.1 208.0"/>
      <path d="M431.3 208.0L433.7 217.3L434.3 226.7L433.6 236.2L432.0 245.5L429.8 254.8M195.9 123.7L203.1 119.1L209.7 114.1L215.2 107.9L220.0 100.2L224.6 91.2L229.7 81.7M333.9 84.5L341.0 89.7L347.7 95.1L354.4 100.0L361.4 104.1L369.2 107.4L377.6 110.4L386.0 114.0L393.6 118.9L399.6 125.4L403.5 133.5L405.5 142.5L406.2 151.7L406.8 160.4L408.4 168.5L411.6 176.0L416.3 183.3L421.8 190.9L427.1 199.1L431.3 208.0"/>
      <path d="M437.3 208.0L439.3 217.7L439.7 227.4L438.9 237.2L437.4 247.0L435.3 256.6M193.7 121.8L200.7 116.7L206.9 110.9L212.0 103.7L216.4 94.9L221.0 85.0M342.7 85.6L349.7 90.9L356.9 95.6L364.7 99.3L373.1 102.3L381.9 105.5L390.4 109.6L397.8 115.3L403.1 122.7L406.4 131.6L407.8 141.1L408.5 150.5L409.7 159.3L412.2 167.2L416.4 174.7L422.0 182.1L428.0 190.1L433.4 198.7L437.3 208.0"/>
      <path d="M443.1 208.0L444.8 218.0L445.0 228.1L444.2 238.3L442.9 248.4L440.9 258.5M191.4 119.8L198.2 114.2L203.8 107.4L208.4 99.0L212.6 89.1L217.2 78.5M344.4 81.5L351.9 86.6L359.7 90.8L368.1 94.1L377.1 97.1L386.3 100.5L394.7 105.3L401.5 111.9L406.2 120.4L408.8 130.0L410.0 139.9L411.0 149.3L412.9 157.9L416.4 165.8L421.7 173.2L428.0 180.9L434.4 189.3L439.6 198.3L443.1 208.0"/>
      <path d="M448.8 208.0L450.2 218.4L450.3 228.8L449.7 239.4L448.5 249.9L446.4 260.4M195.4 111.4L200.4 103.5L204.5 93.9L208.5 83.1M362.6 85.7L371.7 88.7L381.2 91.7L390.5 95.6L398.7 101.3L404.9 109.0L408.9 118.3L410.9 128.5L412.1 138.7L413.5 148.1L416.4 156.5L421.1 164.2L427.3 171.7L434.2 179.7L440.7 188.4L445.6 197.9L448.8 208.0"/>
      <path d="M454.3 208.0L455.5 218.7L455.7 229.6L455.3 240.5L454.2 251.5L452.0 262.3M192.2 108.2L196.5 99.2L200.3 88.4L204.4 76.8M375.5 83.1L385.4 86.3L394.6 91.0L402.3 97.7L407.8 106.4L411.1 116.6L412.9 127.2L414.2 137.4L416.4 146.6L420.4 154.8L426.2 162.5L433.3 170.2L440.5 178.5L446.9 187.6L451.5 197.5L454.3 208.0"/>
      <path d="M459.6 208.0L460.8 219.1L461.2 230.3L461.0 241.6L459.9 253.0L457.3 264.1M389.4 81.0L398.5 86.6L405.6 94.4L410.4 104.2L413.1 115.1L414.7 126.0L416.5 136.1L419.7 145.0L424.8 153.0L431.6 160.6L439.4 168.5L446.8 177.2L452.9 186.8L457.1 197.2L459.6 208.0"/>
      <path d="M464.9 208.0L466.2 219.4L466.8 231.0L466.8 242.8L465.6 254.5M402.0 82.6L408.4 91.6L412.5 102.4L414.8 113.8L416.6 124.7L419.1 134.6L423.4 143.2L429.7 151.0L437.4 158.6L445.6 166.8L453.0 176.0L458.7 186.0L462.6 196.8L464.9 208.0"/>
      <path d="M470.2 208.0L471.7 219.8L472.6 231.8L472.6 243.9L471.1 256.0M405.0 79.1L410.7 89.3L414.2 100.8L416.4 112.5L418.6 123.4L422.1 132.9L427.6 141.1L434.9 148.8L443.4 156.6L451.8 165.2L459.0 174.8L464.4 185.3L467.9 196.5L470.2 208.0"/>
      <path d="M475.6 208.0L477.3 220.1L478.4 232.5L478.4 245.1L476.5 257.4M407.7 76.1L412.7 87.3L415.8 99.5L418.1 111.3L421.0 121.8L425.5 130.9L432.2 138.9L440.6 146.5L449.5 154.5L457.9 163.5L464.8 173.6L469.8 184.6L473.2 196.1L475.6 208.0"/>
      <path d="M481.0 208.0L483.1 220.5L484.4 233.3L484.1 246.2L481.5 258.8M414.3 85.7L417.2 98.2L419.8 109.9L423.7 120.0L429.4 128.6L437.3 136.4L446.4 144.0L455.7 152.4L463.9 161.9L470.4 172.5L475.1 183.9L478.4 195.8L481.0 208.0"/>
      <path d="M486.6 208.0L489.0 220.9L490.3 234.1L489.6 247.3L486.0 260.0M415.7 84.3L418.6 97.0L421.9 108.3L426.8 117.9L433.8 126.1L442.7 133.7L452.4 141.6L461.7 150.4L469.6 160.4L475.7 171.5L480.2 183.2L483.7 195.4L486.6 208.0"/>
      <path d="M492.4 208.0L495.0 221.3L496.1 234.9L494.7 248.3L490.2 261.1M416.9 83.1L420.1 95.6L424.3 106.5L430.4 115.5L438.7 123.3L448.4 130.9L458.4 139.1L467.6 148.4L475.1 158.9L480.9 170.4L485.4 182.5L489.1 195.1L492.4 208.0"/>
      <path d="M498.3 208.0L500.9 221.7L501.6 235.6L499.4 249.2L493.8 262.1M418.1 81.9L421.9 94.1L427.2 104.3L434.6 112.7L443.9 120.3L454.2 128.0L464.4 136.6L473.3 146.5L480.4 157.5L486.0 169.4L490.6 181.9L494.7 194.7L498.3 208.0"/>
      <path d="M504.3 208.0L506.8 222.1L506.8 236.3L503.6 250.1L497.0 262.9M419.4 80.6L424.1 92.2L430.5 101.7L439.1 109.7L449.4 117.1L460.1 125.1L470.2 134.2L478.7 144.6L485.5 156.1L491.1 168.4L495.9 181.2L500.4 194.3L504.3 208.0"/>
      <path d="M510.3 208.0L512.4 222.4L511.6 236.9L507.3 250.8L499.8 263.7M421.0 79.0L426.6 89.9L434.4 98.8L444.1 106.4L455.0 113.9L465.9 122.2L475.7 131.9L483.9 142.9L490.5 154.8L496.2 167.4L501.4 180.4L506.3 194.0L510.3 208.0"/>
      <path d="M516.2 208.0L517.7 222.8L515.9 237.5L510.5 251.5L502.2 264.3M422.8 77.2L429.7 87.2L438.7 95.5L449.4 102.9L460.8 110.6L471.6 119.4L481.1 129.7L488.9 141.2L495.4 153.5L501.3 166.4L507.0 179.7L512.2 193.6L516.2 208.0"/>
      <path d="M521.9 208.0L522.6 223.1L519.6 238.0L513.2 252.0L504.5 264.9M433.3 84.1L443.4 91.8L454.8 99.2L466.4 107.3L477.1 116.7L486.1 127.6L493.7 139.5L500.4 152.2L506.7 165.3L512.8 178.9L518.2 193.2L521.9 208.0"/>
    </g>
    <!-- ribbon B: right descending leg -->
    <path d="M556 78C585 92 612 116 635 138C660 164 685 196 700 215C712 232 720 246 728 264" fill="none" stroke="#5e4570" stroke-width="52"/>
    <!-- ribbon A -->
    <path d="M611 20C592 66 560 100 530 128C500 156 476 186 462 215C452 236 446 250 440 266" fill="none" stroke="#6a507a" stroke-width="58"/>
    <!-- dash texture right part -->
    <rect x="826" y="33" width="401" height="217" fill="url(#dash)"/>
    <!-- ribbon C -->
    <path d="M858 33H917C924 48 940 64 964 74C990 84 1012 90 1030 104C1052 122 1068 146 1086 178L1030 178C1022 170 1012 163 1000 161C975 158 955 146 936 128C915 108 902 88 888 66C880 52 868 42 858 33Z" fill="#694f79"/>
    <g fill="#452c52" opacity=".55"><circle cx="906.3" cy="64.0" r="1.2"/><circle cx="887.4" cy="53.3" r="0.6"/><circle cx="890.9" cy="62.9" r="0.7"/><circle cx="881.7" cy="45.1" r="0.7"/><circle cx="903.0" cy="86.7" r="1.0"/><circle cx="917.7" cy="62.0" r="1.2"/><circle cx="902.1" cy="90.2" r="0.6"/><circle cx="900.1" cy="83.7" r="0.7"/><circle cx="947.0" cy="102.6" r="0.7"/><circle cx="944.5" cy="91.9" r="1.0"/><circle cx="928.0" cy="93.9" r="0.7"/><circle cx="926.2" cy="108.7" r="1.2"/><circle cx="955.8" cy="114.2" r="0.8"/><circle cx="956.2" cy="127.0" r="0.7"/><circle cx="973.4" cy="113.1" r="0.6"/><circle cx="978.7" cy="127.1" r="1.2"/><circle cx="1004.4" cy="139.8" r="0.6"/><circle cx="1005.2" cy="137.5" r="0.7"/><circle cx="980.4" cy="138.9" r="1.0"/><circle cx="990.7" cy="134.0" r="1.0"/><circle cx="1025.7" cy="148.4" r="0.8"/><circle cx="1030.2" cy="130.6" r="0.8"/><circle cx="1023.4" cy="137.7" r="0.8"/><circle cx="1039.5" cy="146.6" r="0.8"/><circle cx="1054.5" cy="159.3" r="0.8"/><circle cx="1045.1" cy="155.1" r="1.2"/><circle cx="1045.5" cy="153.2" r="1.2"/><circle cx="1037.5" cy="160.4" r="0.7"/><circle cx="616.3" cy="32.6" r="1.0"/><circle cx="588.6" cy="64.6" r="1.2"/><circle cx="591.1" cy="80.3" r="0.6"/><circle cx="596.9" cy="37.0" r="1.0"/><circle cx="575.7" cy="95.8" r="0.7"/><circle cx="555.2" cy="104.0" r="0.8"/><circle cx="564.9" cy="87.1" r="0.7"/><circle cx="592.9" cy="79.1" r="0.7"/><circle cx="537.2" cy="118.7" r="0.6"/><circle cx="541.7" cy="119.9" r="1.2"/><circle cx="554.3" cy="121.7" r="1.2"/><circle cx="544.4" cy="120.3" r="0.8"/><circle cx="496.8" cy="167.1" r="0.8"/><circle cx="496.0" cy="151.1" r="0.6"/><circle cx="522.4" cy="141.6" r="0.8"/><circle cx="524.1" cy="149.0" r="0.8"/><circle cx="616.8" cy="122.8" r="1.0"/><circle cx="623.2" cy="126.1" r="1.0"/><circle cx="648.8" cy="137.7" r="1.2"/><circle cx="653.8" cy="164.1" r="1.0"/><circle cx="629.7" cy="150.6" r="1.0"/><circle cx="649.0" cy="145.1" r="1.0"/><circle cx="252.9" cy="143.7" r="0.8"/><circle cx="265.3" cy="105.8" r="1.0"/><circle cx="263.5" cy="125.0" r="0.7"/><circle cx="335.8" cy="84.2" r="0.7"/><circle cx="325.8" cy="86.7" r="0.7"/><circle cx="340.2" cy="86.4" r="0.8"/><circle cx="414.0" cy="76.6" r="0.7"/><circle cx="433.4" cy="69.5" r="0.8"/><circle cx="460.2" cy="77.1" r="1.2"/><circle cx="467.6" cy="76.2" r="0.6"/><circle cx="478.1" cy="84.0" r="0.8"/><circle cx="527.7" cy="73.9" r="1.2"/><circle cx="324.4" cy="140.6" r="1.2"/><circle cx="405.2" cy="112.4" r="0.7"/><circle cx="333.9" cy="154.8" r="0.6"/><circle cx="223.3" cy="192.4" r="1.2"/><circle cx="228.7" cy="196.6" r="1.0"/><circle cx="245.0" cy="181.3" r="1.0"/></g>
    <!-- right-edge lighter patch with contour lines -->
    <path d="M1183.5 119C1185 132 1186 146 1188 157C1190 168 1191 175 1193 182C1196 191 1200 199 1205 206.5C1212 214 1219 220 1230 227V119Z" fill="#583b69"/>
    <g fill="none" stroke="#8f7ba6" stroke-width=".9" opacity=".6">
      <path d="M1188 121C1193 138 1197 152 1192 172"/>
      <path d="M1201 121C1207 140 1210 158 1200 190"/>
      <path d="M1213 122C1219 142 1221 164 1209 202"/>
      <path d="M1224 124C1229 146 1230 170 1218 212"/>
      <path d="M1234 150C1236 176 1232 200 1226 220"/>
    </g>
    <!-- top shadow -->
    <rect x="200" y="33" width="1027" height="3" fill="#000" opacity=".12"/>
  </svg>
</div>
<div id="bg">
  <svg class="abs" style="left:0;top:0" width="1027" height="612" viewBox="0 0 1027 612">
    <defs>
      <pattern id="h0" width="3.3" height="3.3" patternUnits="userSpaceOnUse" patternTransform="rotate(0)"><rect width="3.3" height="1.7" fill="#f3f2f0"/></pattern>
      <pattern id="h1" width="3.3" height="3.3" patternUnits="userSpaceOnUse" patternTransform="rotate(32)"><rect width="3.3" height="1.7" fill="#f3f2f0"/></pattern>
      <pattern id="h2" width="3.3" height="3.3" patternUnits="userSpaceOnUse" patternTransform="rotate(61)"><rect width="3.3" height="1.7" fill="#f3f2f0"/></pattern>
      <pattern id="h3" width="3.3" height="3.3" patternUnits="userSpaceOnUse" patternTransform="rotate(90)"><rect width="3.3" height="1.7" fill="#f3f2f0"/></pattern>
      <pattern id="h4" width="3.3" height="3.3" patternUnits="userSpaceOnUse" patternTransform="rotate(122)"><rect width="3.3" height="1.7" fill="#f3f2f0"/></pattern>
      <pattern id="h5" width="3.3" height="3.3" patternUnits="userSpaceOnUse" patternTransform="rotate(151)"><rect width="3.3" height="1.7" fill="#f3f2f0"/></pattern>
    </defs>
    <rect width="1027" height="612" fill="#eeedeb"/>
    <polygon points="-9,-18 82,-22 51,59" fill="url(#h1)"/>
    <polygon points="-9,-18 51,59 2,51" fill="url(#h0)"/>
    <polygon points="82,-22 150,-7 157,70" fill="url(#h0)"/>
    <polygon points="82,-22 157,70 51,59" fill="url(#h3)"/>
    <polygon points="150,-7 199,0 212,78" fill="url(#h4)"/>
    <polygon points="150,-7 212,78 157,70" fill="url(#h3)"/>
    <polygon points="199,0 272,-3 212,78" fill="url(#h2)"/>
    <polygon points="272,-3 294,64 212,78" fill="url(#h4)"/>
    <polygon points="272,-3 348,-21 385,84" fill="url(#h4)"/>
    <polygon points="272,-3 385,84 294,64" fill="url(#h5)"/>
    <polygon points="348,-21 440,17 431,78" fill="url(#h0)"/>
    <polygon points="348,-21 431,78 385,84" fill="url(#h1)"/>
    <polygon points="440,17 498,-14 519,94" fill="url(#h1)"/>
    <polygon points="440,17 519,94 431,78" fill="url(#h1)"/>
    <polygon points="498,-14 599,23 519,94" fill="url(#h5)"/>
    <polygon points="599,23 604,63 519,94" fill="url(#h2)"/>
    <polygon points="599,23 670,-5 604,63" fill="url(#h1)"/>
    <polygon points="670,-5 691,54 604,63" fill="url(#h2)"/>
    <polygon points="670,-5 765,-24 736,87" fill="url(#h5)"/>
    <polygon points="670,-5 736,87 691,54" fill="url(#h1)"/>
    <polygon points="765,-24 833,-11 796,73" fill="url(#h0)"/>
    <polygon points="765,-24 796,73 736,87" fill="url(#h2)"/>
    <polygon points="833,-11 870,-20 864,83" fill="url(#h0)"/>
    <polygon points="833,-11 864,83 796,73" fill="url(#h5)"/>
    <polygon points="870,-20 952,16 864,83" fill="url(#h1)"/>
    <polygon points="952,16 976,78 864,83" fill="url(#h4)"/>
    <polygon points="952,16 1019,4 1056,64" fill="url(#h3)"/>
    <polygon points="952,16 1056,64 976,78" fill="url(#h0)"/>
    <polygon points="1019,4 1117,-7 1056,64" fill="url(#h5)"/>
    <polygon points="1117,-7 1120,79 1056,64" fill="url(#h3)"/>
    <polygon points="2,51 51,59 4,146" fill="url(#h4)"/>
    <polygon points="51,59 92,171 4,146" fill="url(#h3)"/>
    <polygon points="51,59 157,70 92,171" fill="url(#h2)"/>
    <polygon points="157,70 147,157 92,171" fill="url(#h5)"/>
    <polygon points="157,70 212,78 199,158" fill="url(#h1)"/>
    <polygon points="157,70 199,158 147,157" fill="url(#h2)"/>
    <polygon points="212,78 294,64 304,174" fill="url(#h5)"/>
    <polygon points="212,78 304,174 199,158" fill="url(#h5)"/>
    <polygon points="294,64 385,84 304,174" fill="url(#h3)"/>
    <polygon points="385,84 387,137 304,174" fill="url(#h2)"/>
    <polygon points="385,84 431,78 387,137" fill="url(#h1)"/>
    <polygon points="431,78 438,157 387,137" fill="url(#h0)"/>
    <polygon points="431,78 519,94 493,146" fill="url(#h5)"/>
    <polygon points="431,78 493,146 438,157" fill="url(#h2)"/>
    <polygon points="519,94 604,63 575,128" fill="url(#h0)"/>
    <polygon points="519,94 575,128 493,146" fill="url(#h0)"/>
    <polygon points="604,63 691,54 575,128" fill="url(#h3)"/>
    <polygon points="691,54 643,162 575,128" fill="url(#h4)"/>
    <polygon points="691,54 736,87 643,162" fill="url(#h2)"/>
    <polygon points="736,87 721,135 643,162" fill="url(#h4)"/>
    <polygon points="736,87 796,73 808,167" fill="url(#h2)"/>
    <polygon points="736,87 808,167 721,135" fill="url(#h0)"/>
    <polygon points="796,73 864,83 866,145" fill="url(#h1)"/>
    <polygon points="796,73 866,145 808,167" fill="url(#h2)"/>
    <polygon points="864,83 976,78 965,168" fill="url(#h2)"/>
    <polygon points="864,83 965,168 866,145" fill="url(#h2)"/>
    <polygon points="976,78 1056,64 965,168" fill="url(#h4)"/>
    <polygon points="1056,64 1053,167 965,168" fill="url(#h2)"/>
    <polygon points="1056,64 1120,79 1098,144" fill="url(#h2)"/>
    <polygon points="1056,64 1098,144 1053,167" fill="url(#h1)"/>
    <polygon points="4,146 92,171 98,204" fill="url(#h0)"/>
    <polygon points="4,146 98,204 -7,242" fill="url(#h2)"/>
    <polygon points="92,171 147,157 131,208" fill="url(#h3)"/>
    <polygon points="92,171 131,208 98,204" fill="url(#h2)"/>
    <polygon points="147,157 199,158 131,208" fill="url(#h1)"/>
    <polygon points="199,158 208,221 131,208" fill="url(#h1)"/>
    <polygon points="199,158 304,174 208,221" fill="url(#h0)"/>
    <polygon points="304,174 301,210 208,221" fill="url(#h0)"/>
    <polygon points="304,174 387,137 344,218" fill="url(#h0)"/>
    <polygon points="304,174 344,218 301,210" fill="url(#h1)"/>
    <polygon points="387,137 438,157 437,225" fill="url(#h0)"/>
    <polygon points="387,137 437,225 344,218" fill="url(#h3)"/>
    <polygon points="438,157 493,146 542,232" fill="url(#h2)"/>
    <polygon points="438,157 542,232 437,225" fill="url(#h5)"/>
    <polygon points="493,146 575,128 593,228" fill="url(#h4)"/>
    <polygon points="493,146 593,228 542,232" fill="url(#h4)"/>
    <polygon points="575,128 643,162 593,228" fill="url(#h1)"/>
    <polygon points="643,162 675,199 593,228" fill="url(#h5)"/>
    <polygon points="643,162 721,135 675,199" fill="url(#h4)"/>
    <polygon points="721,135 761,237 675,199" fill="url(#h3)"/>
    <polygon points="721,135 808,167 761,237" fill="url(#h5)"/>
    <polygon points="808,167 833,237 761,237" fill="url(#h3)"/>
    <polygon points="808,167 866,145 882,217" fill="url(#h5)"/>
    <polygon points="808,167 882,217 833,237" fill="url(#h4)"/>
    <polygon points="866,145 965,168 882,217" fill="url(#h0)"/>
    <polygon points="965,168 941,229 882,217" fill="url(#h5)"/>
    <polygon points="965,168 1053,167 941,229" fill="url(#h5)"/>
    <polygon points="1053,167 1013,200 941,229" fill="url(#h3)"/>
    <polygon points="1053,167 1098,144 1013,200" fill="url(#h4)"/>
    <polygon points="1098,144 1095,204 1013,200" fill="url(#h1)"/>
    <polygon points="-7,242 98,204 -8,273" fill="url(#h4)"/>
    <polygon points="98,204 48,278 -8,273" fill="url(#h4)"/>
    <polygon points="98,204 131,208 48,278" fill="url(#h0)"/>
    <polygon points="131,208 127,289 48,278" fill="url(#h5)"/>
    <polygon points="131,208 208,221 127,289" fill="url(#h5)"/>
    <polygon points="208,221 197,315 127,289" fill="url(#h5)"/>
    <polygon points="208,221 301,210 197,315" fill="url(#h5)"/>
    <polygon points="301,210 302,278 197,315" fill="url(#h1)"/>
    <polygon points="301,210 344,218 357,288" fill="url(#h0)"/>
    <polygon points="301,210 357,288 302,278" fill="url(#h1)"/>
    <polygon points="344,218 437,225 357,288" fill="url(#h0)"/>
    <polygon points="437,225 437,276 357,288" fill="url(#h3)"/>
    <polygon points="437,225 542,232 437,276" fill="url(#h4)"/>
    <polygon points="542,232 536,322 437,276" fill="url(#h0)"/>
    <polygon points="542,232 593,228 536,322" fill="url(#h5)"/>
    <polygon points="593,228 590,295 536,322" fill="url(#h4)"/>
    <polygon points="593,228 675,199 590,295" fill="url(#h3)"/>
    <polygon points="675,199 644,275 590,295" fill="url(#h2)"/>
    <polygon points="675,199 761,237 732,284" fill="url(#h0)"/>
    <polygon points="675,199 732,284 644,275" fill="url(#h5)"/>
    <polygon points="761,237 833,237 732,284" fill="url(#h4)"/>
    <polygon points="833,237 831,278 732,284" fill="url(#h0)"/>
    <polygon points="833,237 882,217 831,278" fill="url(#h0)"/>
    <polygon points="882,217 863,319 831,278" fill="url(#h5)"/>
    <polygon points="882,217 941,229 863,319" fill="url(#h2)"/>
    <polygon points="941,229 963,278 863,319" fill="url(#h0)"/>
    <polygon points="941,229 1013,200 963,278" fill="url(#h1)"/>
    <polygon points="1013,200 1038,271 963,278" fill="url(#h5)"/>
    <polygon points="1013,200 1095,204 1038,271" fill="url(#h1)"/>
    <polygon points="1095,204 1111,321 1038,271" fill="url(#h5)"/>
    <polygon points="-8,273 48,278 19,380" fill="url(#h3)"/>
    <polygon points="48,278 62,363 19,380" fill="url(#h3)"/>
    <polygon points="48,278 127,289 62,363" fill="url(#h0)"/>
    <polygon points="127,289 131,384 62,363" fill="url(#h3)"/>
    <polygon points="127,289 197,315 131,384" fill="url(#h2)"/>
    <polygon points="197,315 224,385 131,384" fill="url(#h0)"/>
    <polygon points="197,315 302,278 224,385" fill="url(#h5)"/>
    <polygon points="302,278 287,356 224,385" fill="url(#h1)"/>
    <polygon points="302,278 357,288 386,395" fill="url(#h1)"/>
    <polygon points="302,278 386,395 287,356" fill="url(#h2)"/>
    <polygon points="357,288 437,276 462,386" fill="url(#h5)"/>
    <polygon points="357,288 462,386 386,395" fill="url(#h5)"/>
    <polygon points="437,276 536,322 535,382" fill="url(#h4)"/>
    <polygon points="437,276 535,382 462,386" fill="url(#h1)"/>
    <polygon points="536,322 590,295 578,371" fill="url(#h0)"/>
    <polygon points="536,322 578,371 535,382" fill="url(#h3)"/>
    <polygon points="590,295 644,275 658,346" fill="url(#h5)"/>
    <polygon points="590,295 658,346 578,371" fill="url(#h0)"/>
    <polygon points="644,275 732,284 658,346" fill="url(#h5)"/>
    <polygon points="732,284 715,359 658,346" fill="url(#h3)"/>
    <polygon points="732,284 831,278 801,380" fill="url(#h4)"/>
    <polygon points="732,284 801,380 715,359" fill="url(#h2)"/>
    <polygon points="831,278 863,319 912,367" fill="url(#h3)"/>
    <polygon points="831,278 912,367 801,380" fill="url(#h0)"/>
    <polygon points="863,319 963,278 912,367" fill="url(#h4)"/>
    <polygon points="963,278 985,395 912,367" fill="url(#h1)"/>
    <polygon points="963,278 1038,271 1060,363" fill="url(#h0)"/>
    <polygon points="963,278 1060,363 985,395" fill="url(#h3)"/>
    <polygon points="1038,271 1111,321 1095,356" fill="url(#h3)"/>
    <polygon points="1038,271 1095,356 1060,363" fill="url(#h0)"/>
    <polygon points="19,380 62,363 -16,429" fill="url(#h3)"/>
    <polygon points="62,363 80,465 -16,429" fill="url(#h2)"/>
    <polygon points="62,363 131,384 166,443" fill="url(#h1)"/>
    <polygon points="62,363 166,443 80,465" fill="url(#h0)"/>
    <polygon points="131,384 224,385 166,443" fill="url(#h1)"/>
    <polygon points="224,385 230,460 166,443" fill="url(#h5)"/>
    <polygon points="224,385 287,356 230,460" fill="url(#h2)"/>
    <polygon points="287,356 274,452 230,460" fill="url(#h1)"/>
    <polygon points="287,356 386,395 274,452" fill="url(#h5)"/>
    <polygon points="386,395 391,459 274,452" fill="url(#h4)"/>
    <polygon points="386,395 462,386 457,443" fill="url(#h0)"/>
    <polygon points="386,395 457,443 391,459" fill="url(#h5)"/>
    <polygon points="462,386 535,382 501,459" fill="url(#h3)"/>
    <polygon points="462,386 501,459 457,443" fill="url(#h3)"/>
    <polygon points="535,382 578,371 583,460" fill="url(#h1)"/>
    <polygon points="535,382 583,460 501,459" fill="url(#h0)"/>
    <polygon points="578,371 658,346 583,460" fill="url(#h5)"/>
    <polygon points="658,346 691,439 583,460" fill="url(#h3)"/>
    <polygon points="658,346 715,359 735,467" fill="url(#h5)"/>
    <polygon points="658,346 735,467 691,439" fill="url(#h1)"/>
    <polygon points="715,359 801,380 826,427" fill="url(#h3)"/>
    <polygon points="715,359 826,427 735,467" fill="url(#h2)"/>
    <polygon points="801,380 912,367 869,426" fill="url(#h2)"/>
    <polygon points="801,380 869,426 826,427" fill="url(#h0)"/>
    <polygon points="912,367 985,395 983,460" fill="url(#h2)"/>
    <polygon points="912,367 983,460 869,426" fill="url(#h3)"/>
    <polygon points="985,395 1060,363 1018,461" fill="url(#h1)"/>
    <polygon points="985,395 1018,461 983,460" fill="url(#h5)"/>
    <polygon points="1060,363 1095,356 1135,452" fill="url(#h5)"/>
    <polygon points="1060,363 1135,452 1018,461" fill="url(#h2)"/>
    <polygon points="-16,429 80,465 55,493" fill="url(#h0)"/>
    <polygon points="-16,429 55,493 -8,521" fill="url(#h3)"/>
    <polygon points="80,465 166,443 172,526" fill="url(#h4)"/>
    <polygon points="80,465 172,526 55,493" fill="url(#h0)"/>
    <polygon points="166,443 230,460 223,541" fill="url(#h3)"/>
    <polygon points="166,443 223,541 172,526" fill="url(#h2)"/>
    <polygon points="230,460 274,452 223,541" fill="url(#h2)"/>
    <polygon points="274,452 293,537 223,541" fill="url(#h0)"/>
    <polygon points="274,452 391,459 387,503" fill="url(#h5)"/>
    <polygon points="274,452 387,503 293,537" fill="url(#h2)"/>
    <polygon points="391,459 457,443 387,503" fill="url(#h1)"/>
    <polygon points="457,443 431,507 387,503" fill="url(#h1)"/>
    <polygon points="457,443 501,459 431,507" fill="url(#h3)"/>
    <polygon points="501,459 505,522 431,507" fill="url(#h4)"/>
    <polygon points="501,459 583,460 579,514" fill="url(#h2)"/>
    <polygon points="501,459 579,514 505,522" fill="url(#h3)"/>
    <polygon points="583,460 691,439 579,514" fill="url(#h5)"/>
    <polygon points="691,439 647,539 579,514" fill="url(#h3)"/>
    <polygon points="691,439 735,467 647,539" fill="url(#h4)"/>
    <polygon points="735,467 732,516 647,539" fill="url(#h4)"/>
    <polygon points="735,467 826,427 818,539" fill="url(#h0)"/>
    <polygon points="735,467 818,539 732,516" fill="url(#h0)"/>
    <polygon points="826,427 869,426 818,539" fill="url(#h3)"/>
    <polygon points="869,426 884,540 818,539" fill="url(#h3)"/>
    <polygon points="869,426 983,460 884,540" fill="url(#h1)"/>
    <polygon points="983,460 962,520 884,540" fill="url(#h5)"/>
    <polygon points="983,460 1018,461 962,520" fill="url(#h3)"/>
    <polygon points="1018,461 1037,493 962,520" fill="url(#h0)"/>
    <polygon points="1018,461 1135,452 1037,493" fill="url(#h4)"/>
    <polygon points="1135,452 1107,502 1037,493" fill="url(#h1)"/>
    <polygon points="-8,521 55,493 57,591" fill="url(#h3)"/>
    <polygon points="-8,521 57,591 -26,608" fill="url(#h2)"/>
    <polygon points="55,493 172,526 160,595" fill="url(#h2)"/>
    <polygon points="55,493 160,595 57,591" fill="url(#h5)"/>
    <polygon points="172,526 223,541 160,595" fill="url(#h5)"/>
    <polygon points="223,541 213,593 160,595" fill="url(#h2)"/>
    <polygon points="223,541 293,537 299,607" fill="url(#h1)"/>
    <polygon points="223,541 299,607 213,593" fill="url(#h2)"/>
    <polygon points="293,537 387,503 350,595" fill="url(#h5)"/>
    <polygon points="293,537 350,595 299,607" fill="url(#h3)"/>
    <polygon points="387,503 431,507 431,580" fill="url(#h5)"/>
    <polygon points="387,503 431,580 350,595" fill="url(#h1)"/>
    <polygon points="431,507 505,522 532,592" fill="url(#h4)"/>
    <polygon points="431,507 532,592 431,580" fill="url(#h3)"/>
    <polygon points="505,522 579,514 532,592" fill="url(#h3)"/>
    <polygon points="579,514 595,606 532,592" fill="url(#h2)"/>
    <polygon points="579,514 647,539 595,606" fill="url(#h3)"/>
    <polygon points="647,539 687,589 595,606" fill="url(#h3)"/>
    <polygon points="647,539 732,516 746,592" fill="url(#h1)"/>
    <polygon points="647,539 746,592 687,589" fill="url(#h1)"/>
    <polygon points="732,516 818,539 815,602" fill="url(#h2)"/>
    <polygon points="732,516 815,602 746,592" fill="url(#h4)"/>
    <polygon points="818,539 884,540 886,594" fill="url(#h1)"/>
    <polygon points="818,539 886,594 815,602" fill="url(#h2)"/>
    <polygon points="884,540 962,520 961,615" fill="url(#h4)"/>
    <polygon points="884,540 961,615 886,594" fill="url(#h1)"/>
    <polygon points="962,520 1037,493 961,615" fill="url(#h5)"/>
    <polygon points="1037,493 1046,612 961,615" fill="url(#h3)"/>
    <polygon points="1037,493 1107,502 1133,579" fill="url(#h5)"/>
    <polygon points="1037,493 1133,579 1046,612" fill="url(#h4)"/>
    <polygon points="-26,608 57,591 92,647" fill="url(#h2)"/>
    <polygon points="-26,608 92,647 3,689" fill="url(#h2)"/>
    <polygon points="57,591 160,595 92,647" fill="url(#h3)"/>
    <polygon points="160,595 128,663 92,647" fill="url(#h2)"/>
    <polygon points="160,595 213,593 128,663" fill="url(#h2)"/>
    <polygon points="213,593 200,653 128,663" fill="url(#h1)"/>
    <polygon points="213,593 299,607 200,653" fill="url(#h4)"/>
    <polygon points="299,607 274,675 200,653" fill="url(#h5)"/>
    <polygon points="299,607 350,595 274,675" fill="url(#h1)"/>
    <polygon points="350,595 385,687 274,675" fill="url(#h0)"/>
    <polygon points="350,595 431,580 426,677" fill="url(#h1)"/>
    <polygon points="350,595 426,677 385,687" fill="url(#h3)"/>
    <polygon points="431,580 532,592 526,647" fill="url(#h3)"/>
    <polygon points="431,580 526,647 426,677" fill="url(#h3)"/>
    <polygon points="532,592 595,606 526,647" fill="url(#h0)"/>
    <polygon points="595,606 612,690 526,647" fill="url(#h1)"/>
    <polygon points="595,606 687,589 651,690" fill="url(#h5)"/>
    <polygon points="595,606 651,690 612,690" fill="url(#h3)"/>
    <polygon points="687,589 746,592 651,690" fill="url(#h3)"/>
    <polygon points="746,592 735,665 651,690" fill="url(#h0)"/>
    <polygon points="746,592 815,602 839,683" fill="url(#h4)"/>
    <polygon points="746,592 839,683 735,665" fill="url(#h3)"/>
    <polygon points="815,602 886,594 839,683" fill="url(#h1)"/>
    <polygon points="886,594 870,662 839,683" fill="url(#h0)"/>
    <polygon points="886,594 961,615 963,658" fill="url(#h1)"/>
    <polygon points="886,594 963,658 870,662" fill="url(#h4)"/>
    <polygon points="961,615 1046,612 963,658" fill="url(#h0)"/>
    <polygon points="1046,612 1020,657 963,658" fill="url(#h5)"/>
    <polygon points="1046,612 1133,579 1020,657" fill="url(#h3)"/>
    <polygon points="1133,579 1122,641 1020,657" fill="url(#h0)"/>
    <polygon points="3,689 92,647 3,737" fill="url(#h0)"/>
    <polygon points="92,647 49,731 3,737" fill="url(#h0)"/>
    <polygon points="92,647 128,663 49,731" fill="url(#h1)"/>
    <polygon points="128,663 154,741 49,731" fill="url(#h4)"/>
    <polygon points="128,663 200,653 154,741" fill="url(#h5)"/>
    <polygon points="200,653 199,765 154,741" fill="url(#h5)"/>
    <polygon points="200,653 274,675 311,765" fill="url(#h1)"/>
    <polygon points="200,653 311,765 199,765" fill="url(#h5)"/>
    <polygon points="274,675 385,687 349,728" fill="url(#h5)"/>
    <polygon points="274,675 349,728 311,765" fill="url(#h3)"/>
    <polygon points="385,687 426,677 349,728" fill="url(#h0)"/>
    <polygon points="426,677 420,755 349,728" fill="url(#h0)"/>
    <polygon points="426,677 526,647 506,721" fill="url(#h4)"/>
    <polygon points="426,677 506,721 420,755" fill="url(#h4)"/>
    <polygon points="526,647 612,690 588,761" fill="url(#h2)"/>
    <polygon points="526,647 588,761 506,721" fill="url(#h1)"/>
    <polygon points="612,690 651,690 588,761" fill="url(#h0)"/>
    <polygon points="651,690 683,727 588,761" fill="url(#h0)"/>
    <polygon points="651,690 735,665 683,727" fill="url(#h3)"/>
    <polygon points="735,665 722,762 683,727" fill="url(#h2)"/>
    <polygon points="735,665 839,683 722,762" fill="url(#h5)"/>
    <polygon points="839,683 818,750 722,762" fill="url(#h1)"/>
    <polygon points="839,683 870,662 867,717" fill="url(#h1)"/>
    <polygon points="839,683 867,717 818,750" fill="url(#h4)"/>
    <polygon points="870,662 963,658 972,736" fill="url(#h3)"/>
    <polygon points="870,662 972,736 867,717" fill="url(#h5)"/>
    <polygon points="963,658 1020,657 972,736" fill="url(#h0)"/>
    <polygon points="1020,657 1014,763 972,736" fill="url(#h0)"/>
    <polygon points="1020,657 1122,641 1117,756" fill="url(#h5)"/>
    <polygon points="1020,657 1117,756 1014,763" fill="url(#h5)"/>
  </svg>
</div>

<div class="t" style="left:221px;top:61px;font-family:'Liberation Sans',sans-serif;font-size:30.5px;line-height:40px;color:#fff">ホーム</div>
<div class="t" id="date" style="left:219.5px;top:110px;font-size:13px;line-height:18px;font-weight:700;color:#fff;letter-spacing:.1px">2023年7月14日 金曜日 11:31</div>

<!-- ============ CARDS ============ -->
<div class="card" id="c1" style="left:304px">
  <svg class="stripe" width="264" height="10" viewBox="0 0 264 10" preserveAspectRatio="none">
    <rect width="264" height="10" fill="#6e5590"/>
    <path d="M8 0H18L22 10H12Z" fill="#f6a23c"/>
    <path d="M23 0H41L44 10H28Z" fill="#f6a23c"/>
    <path d="M52 0H62L67 10H57Z" fill="#b39dd4"/>
    <path d="M62 0H82L87 10H67Z" fill="#e6dbf2"/>
    <path d="M82 0H104L109 10H87Z" fill="#a893cc"/>
    <path d="M104 0H121L126 10H109Z" fill="#e2d6f0"/>
    <path d="M121 0H138L143 10H126Z" fill="#b29cd3"/>
    <path d="M138 0H157L162 10H143Z" fill="#3a3633"/>
    <path d="M157 0H258L259 10H162Z" fill="#bab6b1"/>
    <g fill="none" stroke="#a19c96" stroke-width="1" opacity=".75">
      <path d="M170 6c3-4 6-4 8-1s5 2 7-2M192 7c3-4 6-4 8-1s5 2 7-2M214 6c3-4 6-4 8-1s5 2 7-2M236 7c3-4 6-4 8-1s5 2 7-2"/>
    </g>
  </svg>
  <div class="ctitle" id="c1t" style="top:35px;font-size:15.6px">最近のアイテム</div>
  <div class="uline"></div>
  <svg class="abs" style="left:86px;top:244px" width="100" height="70" viewBox="390 418 100 70">
    <path d="M398.5 470C397 462 410 452 426 446C432 444 434 440 437 434C442 425 452 422 461 425C471 429 475 439 472 450C469 462 458 470 444 474C428 478 400 480 398.5 470Z" fill="#f0efed"/>
    <g fill="none" stroke="#161513" stroke-width="2.8" stroke-linejoin="miter">
      <path d="M421.3 449V441.4H430M442.6 441.4H451V449M451 459.6V467.4H442.6M430 467.4H421.3V459.6"/>
      <rect x="428.2" y="447.8" width="16.2" height="12.6"/>
    </g>
  </svg>
  <div class="t" id="c1b1" style="left:0;width:264px;text-align:center;top:348.4px;font-size:16px;line-height:22.8px;font-weight:700">最近のアイテムはありませ</div>
  <div class="t" id="c1b2" style="left:0;width:264px;text-align:center;top:371px;font-size:16px;line-height:22.8px;font-weight:700">ん。</div>
  <div class="t" id="c1n1" style="left:0;width:264px;text-align:center;top:399.4px;font-size:12.72px;line-height:15.6px">最近アクセスしたアイテムはあり</div>
  <div class="t" id="c1n2" style="left:0;width:264px;text-align:center;top:415px;font-size:12.72px;line-height:15.6px">ません。</div>
</div>
<div class="card" id="c2" style="left:588px">
  <svg class="stripe" width="264" height="10" viewBox="0 0 264 10" preserveAspectRatio="none">
    <rect width="264" height="10" fill="#6e5590"/>
    <path d="M8 0H18L22 10H12Z" fill="#f6a23c"/>
    <path d="M23 0H41L44 10H28Z" fill="#f6a23c"/>
    <path d="M52 0H62L67 10H57Z" fill="#b39dd4"/>
    <path d="M62 0H82L87 10H67Z" fill="#e6dbf2"/>
    <path d="M82 0H104L109 10H87Z" fill="#a893cc"/>
    <path d="M104 0H121L126 10H109Z" fill="#e2d6f0"/>
    <path d="M121 0H138L143 10H126Z" fill="#b29cd3"/>
    <path d="M138 0H157L162 10H143Z" fill="#3a3633"/>
    <path d="M157 0H258L259 10H162Z" fill="#bab6b1"/>
    <g fill="none" stroke="#a19c96" stroke-width="1" opacity=".75">
      <path d="M170 6c3-4 6-4 8-1s5 2 7-2M192 7c3-4 6-4 8-1s5 2 7-2M214 6c3-4 6-4 8-1s5 2 7-2M236 7c3-4 6-4 8-1s5 2 7-2"/>
    </g>
  </svg>
  <div class="ctitle" style="top:35px">さらに学ぶ</div>
  <div class="uline"></div>
  <svg class="abs" style="left:24.8px;top:92.8px" width="54.3" height="57.2" viewBox="0 0 54 57" preserveAspectRatio="none">
    <defs><clipPath id="k1"><rect width="54" height="57" rx="4.5"/></clipPath></defs>
    <g clip-path="url(#k1)">
      <rect width="54" height="57" fill="#a9cfe4"/>
      <path d="M0 15C8 11 18 10 27 13C36 9 46 11 54 15V40H0Z" fill="#7b9fb5"/>
      <path d="M0 22C5 17 14 15 22 17L0 36Z" fill="#9fc2d6"/>
      <path d="M12 57L33 27L54 27V57Z" fill="#d9d4ca"/>
      <path d="M0 32L15 18L31 14L35 26L12 57H0Z" fill="#ec6f43"/>
      <path d="M14 20L27 15L30 21L17 27Z" fill="#f3885e"/>
      <path d="M6 30L21 24L24 29L9 37Z" fill="#f8b493"/>
      <path d="M1 40L14 34L18 39L5 47Z" fill="#e35c3e"/>
      <path d="M0 48L9 44L12 49L3 57H0Z" fill="#f08a5a"/>
      <path d="M19 31L27 29L28 33L20 35Z" fill="#6c86b4"/>
      <path d="M0 24L12 19L13 21L0 27Z" fill="#e8744a"/>
      <ellipse cx="31.5" cy="19" rx="3.6" ry="8.6" transform="rotate(-14 31.5 19)" fill="#b9dbea" stroke="#5d7f96" stroke-width="1"/>
      <path d="M33 27L40 41" stroke="#2b2a2a" stroke-width="1.3"/>
      <circle cx="38.6" cy="14.6" r="2.6" fill="#2b211d"/>
      <path d="M36 18L43 19L45 28L41 33L37 30Z" fill="#4aa79a"/>
      <path d="M41 29L44 33L50 46L47 47L41 37L35 46L32 45L37 33Z" fill="#2f8a66"/>
      <path d="M31 45L35 46L34 48L30 47ZM47 47L51 45L52 47L48 49Z" fill="#2a2422"/>
    </g>
  </svg>
  <svg class="abs" style="left:98px;top:93px" width="57.8" height="56.8" viewBox="0 0 58 57" preserveAspectRatio="none">
    <defs><clipPath id="k2"><rect width="58" height="57" rx="4.5"/></clipPath></defs>
    <g clip-path="url(#k2)">
      <rect width="58" height="57" fill="#4baad3"/>
      <path d="M9 57L17 46L24.5 37L40 43.5L50 49L51 57Z" fill="#f3ead6"/>
      <path d="M24.5 37L31 43L28 49L37 52L42 57H22L25 47Z" fill="#e6d6b4"/>
      <path d="M40 43.5L50 49L51 57H44L46 51Z" fill="#fbf5e6"/>
      <path d="M5 57L10 52L15.5 46.5L22 48L30 53L33 57Z" fill="#2b2a30"/>
      <path d="M13 50L20 43L27 47L22 52.5Z" fill="#5f6e7c"/>
      <path d="M33.6 11L31.4 36.5" stroke="#b9403a" stroke-width=".9"/>
      <path d="M33.3 10.8C38 12.4 44 10 49.4 10.8L48.2 13.6L49.4 16.4C44 15.8 38 18 33 16.4Z" fill="#d4453a"/>
      <path d="M26.6 20.6C27.8 20 29 20.8 28.8 22.2L32.6 20.4L33 21.4L29.6 24L29.4 29L31 36.4L29.6 36.8L27.6 31L26 36.8L24.6 36.6L26 29L25.4 24Z" fill="#1f2c3e"/>
    </g>
  </svg>
  <svg class="abs" style="left:179px;top:93px" width="58" height="56.8" viewBox="0 0 58 57" preserveAspectRatio="none">
    <defs><clipPath id="k3"><rect width="58" height="57" rx="4.5"/></clipPath></defs>
    <g clip-path="url(#k3)">
      <rect width="58" height="57" fill="#4f817c"/>
      <path d="M0 15C6 16 12 18 17 19C20 20 23 23 23.6 26C24 29 22 31 20 30C18 30 16 28 14 28C9 28 4 26 0 24Z" fill="#2a201b"/>
      <path d="M14 27C17 28 19 30 21 31" stroke="#3b2b24" stroke-width="1.2" fill="none"/>
      <path d="M58 38C52 34 46 33 42 33C40 32 37 31 35 32C38 34 40 35 41 36C36 37 28 39 23.6 41C24 43 28 44 32 44C38 46 46 46 50 44C53 46 56 47 58 47Z" fill="#2a201b"/>
      <g stroke="#c9d55c" stroke-width="1.5" stroke-linecap="round" fill="none">
        <path d="M25.5 26.5C30 24 36 20 44 15.5" stroke-width="1"/>
        <path d="M27.5 25.5L27 20M30.5 24L30.5 17.5M34 22L35 15.5M37.5 19.5L40 14M29 25.5L33 27.5M32.5 23.5L37.5 25M36 21.5L41.5 22M39.5 19L45 18.5"/>
      </g>
    </g>
  </svg>
  <div class="t" style="left:-0.2px;width:100px;text-align:center;top:158.4px;font-size:9.6px;line-height:12px;color:#2b2a28">新機能</div>
  <div class="t" style="left:77.4px;width:100px;text-align:center;top:158px;font-size:9.6px;line-height:12px;color:#2b2a28">はじめに</div>
  <div class="t" style="left:153.8px;width:100px;text-align:center;top:158px;font-size:9.6px;line-height:12px;color:#2b2a28">ヘルプ・セ…</div>
  <div class="ctitle" style="top:215.4px;left:25.3px">ガイド・ツアー</div>
  <div class="lnk" style="left:25.3px;top:250.8px;line-height:20px;font-size:14.3px;">アセット</div>
  <div class="desc" style="left:25.3px;top:269.3px;line-height:13px;">アセットを管理して事前定義チャネルで</div>
  <div class="desc" style="left:25.3px;top:282.2px;line-height:13px;">公開します。</div>
  <div class="lnk" style="left:25.3px;top:310.8px;line-height:20px;font-size:14.3px;">リポジトリ</div>
  <div class="desc" style="left:25.3px;top:329.3px;line-height:13px;">デジタル・アセットを格納および管理す</div>
  <div class="desc" style="left:25.3px;top:342.4px;line-height:13px;">るためのリポジトリを設定します。</div>
  <div class="lnk" style="left:25.3px;top:370.5px;line-height:20px;font-size:14.3px;">Video Plus</div>
  <div class="desc" style="left:25.3px;top:388.9px;line-height:13px;">拡張された制御および配信機能でビデオ</div>
  <div class="desc" style="left:25.3px;top:402.3px;line-height:13px;">を管理します。</div>
  <div class="lnk" style="left:25.3px;top:429.9px;line-height:20px;font-size:14.3px;">サイト</div>
  <div class="desc" style="left:25.3px;top:449.8px;line-height:13px;">リッチなユーザー・エクスペリエンスを</div>
  <div class="desc" style="left:25.3px;top:462.9px;line-height:13px;">提供するWebサイトを作成します。</div>
  <div class="lnk" style="left:25.3px;top:490.4px;line-height:20px;font-size:14.3px;">ドキュメント・コラボレーシ</div>
  <div class="lnk" style="left:25.3px;top:513.2px;line-height:20px;font-size:14.3px;">ョン</div>
  <div class="desc" style="left:25.3px;top:532.6px;line-height:13px;">すべてのコンテンツをクラウドで管理し</div>
  <div class="desc" style="left:25.3px;top:544.8px;line-height:13px;">て作業を完了します。</div>
  <div class="abs" style="left:225.7px;top:255px;width:4.5px;height:303px;background:#ebeae8;border-radius:2px"></div>
</div>
<div class="card" id="c3" style="left:871px">
  <svg class="stripe" width="264" height="10" viewBox="0 0 264 10" preserveAspectRatio="none">
    <rect width="264" height="10" fill="#6e5590"/>
    <path d="M8 0H18L22 10H12Z" fill="#f6a23c"/>
    <path d="M23 0H41L44 10H28Z" fill="#f6a23c"/>
    <path d="M52 0H62L67 10H57Z" fill="#b39dd4"/>
    <path d="M62 0H82L87 10H67Z" fill="#e6dbf2"/>
    <path d="M82 0H104L109 10H87Z" fill="#a893cc"/>
    <path d="M104 0H121L126 10H109Z" fill="#e2d6f0"/>
    <path d="M121 0H138L143 10H126Z" fill="#b29cd3"/>
    <path d="M138 0H157L162 10H143Z" fill="#3a3633"/>
    <path d="M157 0H258L259 10H162Z" fill="#bab6b1"/>
    <g fill="none" stroke="#a19c96" stroke-width="1" opacity=".75">
      <path d="M170 6c3-4 6-4 8-1s5 2 7-2M192 7c3-4 6-4 8-1s5 2 7-2M214 6c3-4 6-4 8-1s5 2 7-2M236 7c3-4 6-4 8-1s5 2 7-2"/>
    </g>
  </svg>
  <div class="ctitle" style="top:35px">クイック・リンク</div>
  <div class="uline"></div>
  <div class="lnk" style="left:25.7px;top:94.8px;line-height:20px;font-size:14.3px;">アセットの管理</div>
  <div class="lnk" style="left:25.7px;top:130.5px;line-height:20px;font-size:14.3px;">グループの管理</div>
  <div class="lnk" style="left:25.7px;top:166.3px;line-height:20px;font-size:14.3px;">お気に入りのドキュメント</div>
  <div class="lnk" style="left:25.7px;top:202.3px;line-height:20px;font-size:14.3px;">お気に入りの会話</div>
  <div class="lnk" style="left:25.7px;top:238.4px;line-height:20px;font-size:14.3px;">割当ての表示</div>
  <div class="lnk" style="left:25.7px;top:275.0px;line-height:20px;font-size:14.3px;">ドキュメントのごみ箱を開く</div>
  <div class="lnk" style="left:25.7px;top:310.8px;line-height:20px;font-size:14.3px;">サイトのごみ箱を開く</div>
  <div class="ctitle" style="top:361.4px;left:25.3px">デスクトップ・アプリケー…</div>
  <div class="t" style="left:25.3px;top:394.8px;line-height:16px;font-size:12.55px;color:#6a6967;">デスクトップ・アプリケーションを</div>
  <div class="t" style="left:25.3px;top:410.9px;line-height:16px;font-size:12.55px;color:#6a6967;">ダウンロードして、すべてのコンピ</div>
  <div class="t" style="left:25.3px;top:427.0px;line-height:16px;font-size:12.55px;color:#6a6967;">ュータ上で全ファイルの同期を保つ</div>
  <div class="t" style="left:25.3px;top:443.2px;line-height:16px;font-size:12.55px;color:#6a6967;">ようにします。もしくはモバイル・</div>
  <div class="t" style="left:25.3px;top:459.3px;line-height:16px;font-size:12.55px;color:#6a6967;">アプリケーションをダウンロードし</div>
  <div class="t" style="left:25.3px;top:475.4px;line-height:16px;font-size:12.55px;color:#6a6967;">て、移動中でも自分のコンテンツに</div>
  <div class="t" style="left:25.3px;top:491.5px;line-height:16px;font-size:12.55px;color:#6a6967;">常に接続できるようにします。</div>
  <div class="abs" style="left:25.3px;top:525.5px;width:192.6px;height:34px;border:1px solid #dddbd9;border-radius:3px;background:#fff"></div>
  <div class="t" style="left:25.3px;width:192.6px;text-align:center;top:535.5px;line-height:14px;font-size:10.9px;font-weight:700;color:#161513">アプリケーションのダウンロード</div>
</div>

</body>
</html>
